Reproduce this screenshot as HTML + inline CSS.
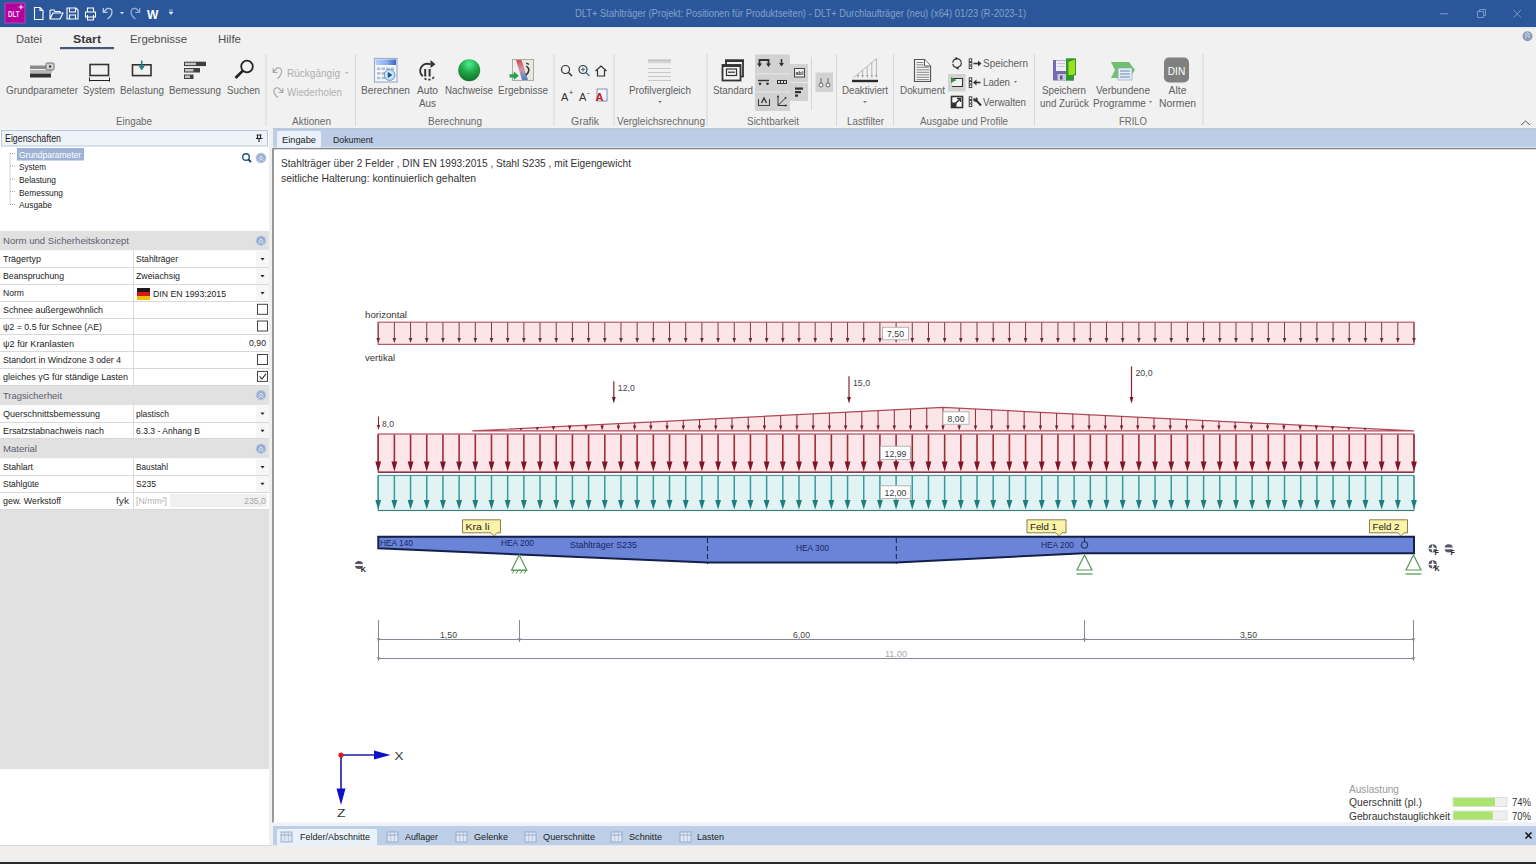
<!DOCTYPE html>
<html><head><meta charset="utf-8"><title>DLT+ Stahlträger</title>
<style>
html,body{margin:0;padding:0;width:1536px;height:864px;overflow:hidden;background:#f0f0f0}
svg{display:block}
text{font-family:"Liberation Sans", sans-serif;white-space:pre}
</style></head><body>
<svg width="1536" height="864" viewBox="0 0 1536 864">
<rect x="0" y="0" width="1536" height="864" fill="#f0f0f0" />
<rect x="0" y="0" width="1536" height="27" fill="#2b579a" />
<rect x="0" y="27" width="1536" height="101" fill="#f1f1f1" />
<rect x="5" y="3" width="20" height="20" fill="#b4009e" stroke="#c050c0" stroke-width="0.8" />
<text x="8" y="16.5" font-size="9" fill="#ffd8f4" text-anchor="start" textLength="11.5" lengthAdjust="spacingAndGlyphs" font-weight="bold" >DLT</text>
<path d="M21 4 L22 6.5 L24.5 7 L22 7.8 L21 10 L20 7.8 L17.5 7 L20 6.5 Z" fill="#ffc0f0" />
<path d="M34.5 7.5 h5.5 l3 3 v9 h-8.5 z M40 7.5 v3 h3" fill="none" stroke="#ffffff" stroke-width="1.1" />
<path d="M50 10 h4 l1 1.5 h5 v2 M50 10 v9 h10 l3 -6 h-10 l-3 6" fill="none" stroke="#ffffff" stroke-width="1.1" />
<path d="M67 8 h9 l2 2 v9 h-11 z M69.5 8 v4 h6 v-4 M69.5 19 v-4 h6 v4" fill="none" stroke="#ffffff" stroke-width="1.1" />
<path d="M85.5 12 h10 v5 h-10 z M87.5 12 v-4 h6 v4 M87.5 15 v5 h6 v-5" fill="none" stroke="#ffffff" stroke-width="1.1" />
<path d="M107.5 19 C114 14.5, 113 7, 107 8.5 L103.5 12 M103.3 8 v4.3 h4.3" fill="none" stroke="#b4c8e6" stroke-width="1.3" />
<path d="M120 12 h4 l-2 2.5 z" fill="#d0dcef" />
<path d="M135.5 19 C129 14.5, 130 7, 136 8.5 L139.5 12 M139.7 8 v4.3 h-4.3" fill="none" stroke="#8fa9d2" stroke-width="1.3" />
<text x="147" y="19" font-size="12" fill="#ffffff" text-anchor="start" font-weight="bold" >W</text>
<path d="M169 12 h4 l-2 2.5 z M169 10 h4" fill="#e0e8f4" stroke="#e0e8f4" stroke-width="0.6" />
<text x="575" y="17" font-size="11" fill="#84a0cb" text-anchor="start" textLength="451" lengthAdjust="spacingAndGlyphs" >DLT+ Stahlträger (Projekt: Positionen für Produktseiten) - DLT+ Durchlaufträger (neu) (x64) 01/23 (R-2023-1)</text>
<line x1="1440" y1="13.8" x2="1448" y2="13.8" stroke="#7898cc" stroke-width="1.1" />
<path d="M1477.5 11.5 h6 v6 h-6 z M1479.5 11.5 v-2 h6 v6 h-2" fill="none" stroke="#7898cc" stroke-width="1" />
<path d="M1513.5 10 l7.5 7.5 M1521 10 l-7.5 7.5" fill="none" stroke="#7898cc" stroke-width="1" />
<rect x="0" y="27" width="1536" height="1.2" fill="#e2eaf6" />
<text x="16" y="42.5" font-size="11" fill="#505050" text-anchor="start" textLength="26" lengthAdjust="spacingAndGlyphs" >Datei</text>
<text x="73" y="42.5" font-size="11" fill="#3a3a3a" text-anchor="start" textLength="28" lengthAdjust="spacingAndGlyphs" font-weight="bold" >Start</text>
<text x="130" y="42.5" font-size="11" fill="#505050" text-anchor="start" textLength="57" lengthAdjust="spacingAndGlyphs" >Ergebnisse</text>
<text x="218" y="42.5" font-size="11" fill="#505050" text-anchor="start" textLength="23" lengthAdjust="spacingAndGlyphs" >Hilfe</text>
<rect x="60" y="47" width="54" height="2.2" fill="#44577a" />
<circle cx="1527.5" cy="36.2" r="5" fill="#8c9cba"/>
<path d="M1525 37.8 l2.5 -2.3 l2.5 2.3 M1525 35.2 l2.5 -2.3 l2.5 2.3" fill="none" stroke="#e8eef8" stroke-width="1" />
<path d="M1521 125 l4.5 -4 l4.5 4" fill="none" stroke="#555" stroke-width="1" />
<line x1="266" y1="54" x2="266" y2="126" stroke="#d6d6d6" stroke-width="1" />
<line x1="355.5" y1="54" x2="355.5" y2="126" stroke="#d6d6d6" stroke-width="1" />
<line x1="554" y1="54" x2="554" y2="126" stroke="#d6d6d6" stroke-width="1" />
<line x1="614" y1="54" x2="614" y2="126" stroke="#d6d6d6" stroke-width="1" />
<line x1="707" y1="54" x2="707" y2="126" stroke="#d6d6d6" stroke-width="1" />
<line x1="836.5" y1="54" x2="836.5" y2="126" stroke="#d6d6d6" stroke-width="1" />
<line x1="893.5" y1="54" x2="893.5" y2="126" stroke="#d6d6d6" stroke-width="1" />
<line x1="1034.5" y1="54" x2="1034.5" y2="126" stroke="#d6d6d6" stroke-width="1" />
<line x1="1203" y1="54" x2="1203" y2="126" stroke="#d6d6d6" stroke-width="1" />
<line x1="811.5" y1="57" x2="811.5" y2="110" stroke="#d6d6d6" stroke-width="1" />
<text x="6" y="93.5" font-size="10" fill="#606060" text-anchor="start" textLength="72" lengthAdjust="spacingAndGlyphs" >Grundparameter</text>
<text x="83" y="93.5" font-size="10" fill="#606060" text-anchor="start" textLength="32" lengthAdjust="spacingAndGlyphs" >System</text>
<text x="120" y="93.5" font-size="10" fill="#606060" text-anchor="start" textLength="44" lengthAdjust="spacingAndGlyphs" >Belastung</text>
<text x="169" y="93.5" font-size="10" fill="#606060" text-anchor="start" textLength="52" lengthAdjust="spacingAndGlyphs" >Bemessung</text>
<text x="227" y="93.5" font-size="10" fill="#606060" text-anchor="start" textLength="33" lengthAdjust="spacingAndGlyphs" >Suchen</text>
<text x="116" y="124.5" font-size="10" fill="#6a6a6a" text-anchor="start" textLength="36" lengthAdjust="spacingAndGlyphs" >Eingabe</text>
<rect x="30" y="65.5" width="20" height="3.5" fill="#8c8c8c" />
<rect x="30" y="70" width="22" height="3" fill="#b8b8b8" />
<rect x="30" y="73.5" width="21" height="4" fill="#333333" />
<rect x="46" y="63" width="8" height="7" fill="#cfcfcf" stroke="#777" stroke-width="1" rx="1"/>
<rect x="49" y="65.5" width="2" height="2" fill="#333" />
<rect x="90" y="64.5" width="18.5" height="11" fill="none" stroke="#333" stroke-width="1.6" />
<path d="M89.5 80.5 h20 M89.5 77.5 v4 M109.5 77.5 v4" fill="none" stroke="#222" stroke-width="1" />
<rect x="132.5" y="64.8" width="18.5" height="10.8" fill="none" stroke="#333" stroke-width="1.6" />
<path d="M141.7 60.5 v6" fill="none" stroke="#1a8080" stroke-width="1.5" />
<path d="M138.7 66 l3 4.5 l3 -4.5 z" fill="#1a8080" />
<rect x="184" y="61.7" width="22" height="4.4" fill="#404040" />
<rect x="184" y="68" width="16" height="4.5" fill="#404040" />
<rect x="184" y="74.5" width="9.5" height="4.5" fill="#404040" />
<rect x="185" y="62.7" width="11" height="2.4" fill="#c4c4c4" />
<rect x="185" y="69" width="8.5" height="2.5" fill="#c4c4c4" />
<rect x="185" y="75.5" width="5" height="2.5" fill="#c4c4c4" />
<circle cx="247" cy="66.5" r="5.8" fill="none" stroke="#222" stroke-width="1.8"/>
<path d="M242.8 70.8 L235.5 78" fill="none" stroke="#222" stroke-width="2.6" />
<path d="M277.5 78.5 C283.5 74, 282.5 66.5, 277 68 L273.5 72 M273.2 68.2 v4.3 h4.3" fill="none" stroke="#a8a8a8" stroke-width="1.2" />
<text x="287" y="76.5" font-size="10" fill="#b0b0b0" text-anchor="start" textLength="53" lengthAdjust="spacingAndGlyphs" >Rückgängig</text>
<path d="M345 72 h3.5 l-1.75 2 z" fill="#b8b8b8" />
<path d="M278 97.5 C272 93, 273 86.5, 278.5 88 L282.5 92 M282.8 88.2 v4.3 h-4.3" fill="none" stroke="#a8a8a8" stroke-width="1.2" />
<text x="287" y="95.5" font-size="10" fill="#b0b0b0" text-anchor="start" textLength="55" lengthAdjust="spacingAndGlyphs" >Wiederholen</text>
<text x="292" y="124.5" font-size="10" fill="#6a6a6a" text-anchor="start" textLength="39" lengthAdjust="spacingAndGlyphs" >Aktionen</text>
<text x="361" y="93.5" font-size="10" fill="#606060" text-anchor="start" textLength="49" lengthAdjust="spacingAndGlyphs" >Berechnen</text>
<text x="417" y="93.5" font-size="10" fill="#606060" text-anchor="start" textLength="21" lengthAdjust="spacingAndGlyphs" >Auto</text>
<text x="419" y="106.5" font-size="10" fill="#606060" text-anchor="start" textLength="17" lengthAdjust="spacingAndGlyphs" >Aus</text>
<text x="445" y="93.5" font-size="10" fill="#606060" text-anchor="start" textLength="48" lengthAdjust="spacingAndGlyphs" >Nachweise</text>
<text x="498" y="93.5" font-size="10" fill="#606060" text-anchor="start" textLength="50" lengthAdjust="spacingAndGlyphs" >Ergebnisse</text>
<text x="428" y="124.5" font-size="10" fill="#6a6a6a" text-anchor="start" textLength="54" lengthAdjust="spacingAndGlyphs" >Berechnung</text>
<defs><linearGradient id="gbh" x1="0" x2="1"><stop offset="0" stop-color="#b4d0f8"/><stop offset="0.55" stop-color="#8ab0ec"/><stop offset="1" stop-color="#3c64c8"/></linearGradient></defs>
<rect x="374.5" y="58.5" width="22.5" height="23.5" fill="#f6f9fc" stroke="#9eaec6" stroke-width="1.2" />
<rect x="375.5" y="59.5" width="20.5" height="5.5" fill="url(#gbh)" />
<rect x="377.0" y="67.5" width="3.4" height="2.6" fill="#b4c0d0" />
<rect x="381.6" y="67.5" width="3.4" height="2.6" fill="#b4c0d0" />
<rect x="386.2" y="67.5" width="3.4" height="2.6" fill="#b4c0d0" />
<rect x="390.8" y="67.5" width="3.4" height="2.6" fill="#b4c0d0" />
<rect x="377.0" y="72.1" width="3.4" height="2.6" fill="#b4c0d0" />
<rect x="381.6" y="72.1" width="3.4" height="2.6" fill="#b4c0d0" />
<rect x="386.2" y="72.1" width="3.4" height="2.6" fill="#b4c0d0" />
<rect x="390.8" y="72.1" width="3.4" height="2.6" fill="#b4c0d0" />
<rect x="377.0" y="76.7" width="3.4" height="2.6" fill="#b4c0d0" />
<rect x="381.6" y="76.7" width="3.4" height="2.6" fill="#b4c0d0" />
<rect x="386.2" y="76.7" width="3.4" height="2.6" fill="#b4c0d0" />
<rect x="390.8" y="76.7" width="3.4" height="2.6" fill="#b4c0d0" />
<circle cx="389.6" cy="75" r="5.4" fill="#c4e6fa" stroke="#5c88b4" stroke-width="0.9"/>
<path d="M387.8 72 l4.6 3 l-4.6 3 z" fill="#1a4c9c" />
<path d="M422.8 76.2 A7 7 0 0 1 429 64" fill="none" stroke="#333" stroke-width="1.9" />
<path d="M428.5 64 h2" fill="none" stroke="#333" stroke-width="1.9" />
<path d="M430.5 60 L435.5 64.2 L430.5 68 Z" fill="#333" />
<path d="M424.5 78.5 A7 7 0 0 0 434.5 76" fill="none" stroke="#333" stroke-width="1.8" stroke-dasharray="2.2 1.8"/>
<rect x="424.2" y="69" width="2" height="7.5" fill="#333" />
<rect x="428.6" y="69" width="2" height="7.5" fill="#333" />
<defs><radialGradient id="gball" cx="0.5" cy="0.22" r="0.85"><stop offset="0" stop-color="#4ef08e"/><stop offset="0.45" stop-color="#22a848"/><stop offset="1" stop-color="#0c6a24"/></radialGradient></defs>
<circle cx="469.2" cy="70.3" r="11" fill="url(#gball)"/>
<defs><linearGradient id="gerg" x1="0" y1="0" x2="0" y2="1"><stop offset="0" stop-color="#e04a4a"/><stop offset="0.5" stop-color="#c89aa8"/><stop offset="1" stop-color="#4a7ec4"/></linearGradient></defs>
<rect x="512.5" y="59.5" width="21" height="21" fill="#ebe8e0" stroke="#a4a4a4" stroke-width="0.9" />
<path d="M513 60 L516 60 L522 80 L513 80 Z" fill="#f2eeee" />
<path d="M516 60 L521.5 60 L528 80 L522 80 Z" fill="url(#gerg)" />
<path d="M526.3 66.2 q5.2 3.6 -0.3 9" fill="none" stroke="#333" stroke-width="1.6" />
<path d="M526.2 63.2 l2.8 1.2" fill="none" stroke="#333" stroke-width="1.3" />
<path d="M509.5 74.2 h4.3 v-2.6 l5 4.2 l-5 4.2 v-2.6 h-4.3 z" fill="#2aa04a" />
<circle cx="565.5" cy="69.5" r="4" fill="none" stroke="#333" stroke-width="1.2"/>
<path d="M568.5 72.5 l3.5 3.5" fill="none" stroke="#333" stroke-width="1.4" />
<circle cx="583" cy="69.5" r="4" fill="none" stroke="#333" stroke-width="1.2"/>
<path d="M586 72.5 l3.5 3.5 M581 69.5 h4 M583 67.5 v4" fill="none" stroke="#2a7a9a" stroke-width="1.2" />
<path d="M595.5 71 l5.5 -5 l5.5 5 M597.5 70 v6 h7 v-6" fill="none" stroke="#333" stroke-width="1.2" />
<text x="561" y="101" font-size="11" fill="#333" text-anchor="start" >A</text>
<text x="569" y="95" font-size="7" fill="#333" text-anchor="start" >+</text>
<text x="579" y="101" font-size="11" fill="#333" text-anchor="start" >A</text>
<text x="587" y="95" font-size="8" fill="#333" text-anchor="start" >-</text>
<rect x="597" y="89" width="10" height="12" fill="#f4f4f8" stroke="#6a7ab0" stroke-width="0.8" />
<text x="595.5" y="100.5" font-size="11" fill="#c01818" text-anchor="start" font-weight="bold" >A</text>
<text x="571" y="124.5" font-size="10" fill="#6a6a6a" text-anchor="start" textLength="28" lengthAdjust="spacingAndGlyphs" >Grafik</text>
<rect x="648" y="59.5" width="23" height="2" fill="#c0c0c0" />
<rect x="648" y="62" width="23" height="1.2" fill="#d0d0d0" />
<line x1="648" y1="68.5" x2="671" y2="68.5" stroke="#c8c8c8" stroke-width="1" />
<line x1="648" y1="72.5" x2="671" y2="72.5" stroke="#c8c8c8" stroke-width="1" />
<line x1="648" y1="76.5" x2="671" y2="76.5" stroke="#c8c8c8" stroke-width="1" />
<line x1="648" y1="80.5" x2="671" y2="80.5" stroke="#c8c8c8" stroke-width="1" />
<text x="629" y="94" font-size="10" fill="#606060" text-anchor="start" textLength="62" lengthAdjust="spacingAndGlyphs" >Profilvergleich</text>
<path d="M658 101 h4 l-2 2 z" fill="#777" />
<text x="617" y="124.5" font-size="10" fill="#6a6a6a" text-anchor="start" textLength="88" lengthAdjust="spacingAndGlyphs" >Vergleichsrechnung</text>
<rect x="726" y="60.5" width="17" height="16" fill="none" stroke="#333" stroke-width="1.8" />
<rect x="725" y="59.5" width="19" height="2.5" fill="#333" />
<rect x="722.5" y="65" width="18" height="15.5" fill="#f3f3f3" stroke="#333" stroke-width="1.8" />
<rect x="722" y="64.5" width="19" height="2.5" fill="#333" />
<rect x="726.5" y="69" width="10" height="6.5" fill="none" stroke="#333" stroke-width="1.2" />
<line x1="728" y1="72.2" x2="735" y2="72.2" stroke="#333" stroke-width="1.2" />
<text x="713" y="93.5" font-size="10" fill="#606060" text-anchor="start" textLength="40" lengthAdjust="spacingAndGlyphs" >Standard</text>
<rect x="755" y="54.4" width="35" height="56.6" fill="#d2d2d2" />
<rect x="790" y="64" width="18" height="37" fill="#d2d2d2" />
<rect x="815.5" y="72.5" width="17.5" height="19.5" fill="#d2d2d2" />
<line x1="756" y1="73.8" x2="790" y2="73.8" stroke="#e8e8e8" stroke-width="1" />
<line x1="756" y1="92" x2="790" y2="92" stroke="#e8e8e8" stroke-width="1" />
<line x1="790" y1="82.5" x2="808" y2="82.5" stroke="#e8e8e8" stroke-width="1" />
<text x="747" y="124.5" font-size="10" fill="#6a6a6a" text-anchor="start" textLength="52" lengthAdjust="spacingAndGlyphs" >Sichtbarkeit</text>
<path d="M759.5 64.5 v-4.5 h9 v4.5" fill="none" stroke="#333" stroke-width="1.8" />
<path d="M757 63.5 h5 l-2.5 3.5 z M766 63.5 h5 l-2.5 3.5 z" fill="#333" />
<path d="M781.5 59 v5" fill="none" stroke="#333" stroke-width="1.6" />
<path d="M779 63 h5 l-2.5 3.5 z" fill="#333" />
<rect x="794.5" y="68.5" width="10" height="8.5" fill="#f0f0f0" stroke="#444" stroke-width="1" />
<text x="799.5" y="75" font-size="5.5" fill="#333" text-anchor="middle" font-weight="bold" >abl</text>
<path d="M758 80.5 h11" fill="none" stroke="#333" stroke-width="1.4" />
<circle cx="760" cy="83.8" r="1.3" fill="#333"/><circle cx="767.5" cy="83.8" r="1.3" fill="#333"/>
<rect x="777" y="80" width="10" height="4" fill="#333" />
<rect x="778" y="81" width="2" height="2" fill="#ddd" />
<rect x="781" y="81" width="2" height="2" fill="#ddd" />
<rect x="784" y="81" width="2" height="2" fill="#ddd" />
<rect x="795" y="87.5" width="8" height="2.2" fill="#333" />
<rect x="795" y="91" width="6" height="2.2" fill="#333" />
<rect x="795" y="94.5" width="3" height="2.2" fill="#333" />
<path d="M758.5 99 v6.5 h11 v-6.5" fill="none" stroke="#444" stroke-width="1.1" />
<path d="M761.5 103 l2.5 -5 l2.5 5" fill="none" stroke="#333" stroke-width="1.3" />
<path d="M778 96.5 v9 h9 M778 105.5 l7 -7" fill="none" stroke="#333" stroke-width="1" />
<circle cx="778" cy="96.5" r="1" fill="#333"/><circle cx="785.5" cy="98" r="1" fill="#333"/><circle cx="785.5" cy="105.5" r="1" fill="#333"/>
<path d="M821 78 v5 M828 78 v5" fill="none" stroke="#666" stroke-width="1" />
<circle cx="821" cy="85" r="2" fill="#f4f4f4" stroke="#666" stroke-width="1"/><circle cx="828" cy="85" r="2" fill="#f4f4f4" stroke="#666" stroke-width="1"/>
<path d="M853 78 L876.5 58.5" fill="none" stroke="#bcbcbc" stroke-width="1" />
<line x1="858.0" y1="73.85106382978724" x2="858.0" y2="76" stroke="#b4b4b4" stroke-width="1" />
<path d="M856.50 75.00 L859.50 75.00 L858.00 78.00 Z" fill="#b0b0b0" />
<line x1="862.6" y1="70.03404255319147" x2="862.6" y2="76" stroke="#b4b4b4" stroke-width="1" />
<path d="M861.10 75.00 L864.10 75.00 L862.60 78.00 Z" fill="#b0b0b0" />
<line x1="867.2" y1="66.2170212765957" x2="867.2" y2="76" stroke="#b4b4b4" stroke-width="1" />
<path d="M865.70 75.00 L868.70 75.00 L867.20 78.00 Z" fill="#b0b0b0" />
<line x1="871.8" y1="62.400000000000034" x2="871.8" y2="76" stroke="#b4b4b4" stroke-width="1" />
<path d="M870.30 75.00 L873.30 75.00 L871.80 78.00 Z" fill="#b0b0b0" />
<line x1="876.4" y1="58.582978723404274" x2="876.4" y2="76" stroke="#b4b4b4" stroke-width="1" />
<path d="M874.90 75.00 L877.90 75.00 L876.40 78.00 Z" fill="#b0b0b0" />
<line x1="852" y1="81" x2="878" y2="81" stroke="#2a2a2a" stroke-width="2.4" />
<text x="842" y="93.5" font-size="10" fill="#606060" text-anchor="start" textLength="46" lengthAdjust="spacingAndGlyphs" >Deaktiviert</text>
<path d="M863 101 h4 l-2 2 z" fill="#777" />
<text x="847" y="124.5" font-size="10" fill="#6a6a6a" text-anchor="start" textLength="37" lengthAdjust="spacingAndGlyphs" >Lastfilter</text>
<path d="M914.5 59.5 h10 l6 6.5 v15.5 h-16 z" fill="#f6f6f6" stroke="#555" stroke-width="1.2" />
<path d="M924.5 59.5 v6.5 h6" fill="#ffffff" stroke="#555" stroke-width="1" />
<line x1="916.5" y1="62.5" x2="923.5" y2="62.5" stroke="#8c8c8c" stroke-width="1.1" />
<line x1="916.5" y1="64.8" x2="923.5" y2="64.8" stroke="#8c8c8c" stroke-width="1.1" />
<line x1="916.5" y1="67.3" x2="929" y2="67.3" stroke="#8c8c8c" stroke-width="1.1" />
<line x1="916.5" y1="69.8" x2="929" y2="69.8" stroke="#8c8c8c" stroke-width="1.1" />
<line x1="916.5" y1="72.3" x2="929" y2="72.3" stroke="#8c8c8c" stroke-width="1.1" />
<line x1="916.5" y1="74.8" x2="929" y2="74.8" stroke="#8c8c8c" stroke-width="1.1" />
<line x1="916.5" y1="77.3" x2="929" y2="77.3" stroke="#8c8c8c" stroke-width="1.1" />
<line x1="916.5" y1="79.6" x2="929" y2="79.6" stroke="#8c8c8c" stroke-width="1.1" />
<text x="900" y="93.5" font-size="10" fill="#606060" text-anchor="start" textLength="45" lengthAdjust="spacingAndGlyphs" >Dokument</text>
<circle cx="957" cy="63.1" r="4.3" fill="none" stroke="#333" stroke-width="1.2" stroke-dasharray="5.5 1.3"/>
<path d="M955.5 57 l3 1.6 l-3 1.6 z M958.5 66.5 l-3 1.6 l3 1.6 z" fill="#222" />
<rect x="948" y="74" width="17.5" height="17.5" fill="#d2d2d2" />
<path d="M952 78.5 h10.5 v8 h-10.5" fill="#eef4ee" stroke="#333" stroke-width="1.1" />
<path d="M951 77 l5.5 3 l-5.5 3 z" fill="#3a8a4a" />
<rect x="951.5" y="96.5" width="11" height="11" fill="#ffffff" stroke="#333" stroke-width="1.6" />
<rect x="951.5" y="102.5" width="5" height="5" fill="#333" />
<path d="M955 104 l5 -5 M957 98.5 h3.5 v3.5" fill="none" stroke="#333" stroke-width="1.5" />
<rect x="969.2" y="58.8" width="2.6" height="2.6" fill="#ffffff" stroke="#333" stroke-width="0.9" />
<rect x="969.2" y="62.4" width="2.6" height="2.6" fill="#ffffff" stroke="#333" stroke-width="0.9" />
<rect x="969.2" y="66.0" width="2.6" height="2.6" fill="#ffffff" stroke="#333" stroke-width="0.9" />
<rect x="969.2" y="77.8" width="2.6" height="2.6" fill="#ffffff" stroke="#333" stroke-width="0.9" />
<rect x="969.2" y="81.39999999999999" width="2.6" height="2.6" fill="#ffffff" stroke="#333" stroke-width="0.9" />
<rect x="969.2" y="85.0" width="2.6" height="2.6" fill="#ffffff" stroke="#333" stroke-width="0.9" />
<rect x="969.2" y="96.8" width="2.6" height="2.6" fill="#ffffff" stroke="#333" stroke-width="0.9" />
<rect x="969.2" y="100.39999999999999" width="2.6" height="2.6" fill="#ffffff" stroke="#333" stroke-width="0.9" />
<rect x="969.2" y="104.0" width="2.6" height="2.6" fill="#ffffff" stroke="#333" stroke-width="0.9" />
<path d="M973.5 63.5 h5.5" fill="none" stroke="#333" stroke-width="1.6" />
<path d="M978 60.5 l3.5 3 l-3.5 3 z" fill="#333" />
<path d="M975 82.5 h5.5" fill="none" stroke="#333" stroke-width="1.6" />
<path d="M976.5 79.5 l-3.5 3 l3.5 3 z" fill="#333" />
<path d="M975 99 l6 6.5" fill="none" stroke="#333" stroke-width="2" />
<circle cx="975.5" cy="99.5" r="2.2" fill="#333"/>
<rect x="974.3" y="96.5" width="1.5" height="2.2" fill="#f1f1f1" />
<text x="983" y="67" font-size="10" fill="#606060" text-anchor="start" textLength="45" lengthAdjust="spacingAndGlyphs" >Speichern</text>
<text x="983" y="86" font-size="10" fill="#606060" text-anchor="start" textLength="27" lengthAdjust="spacingAndGlyphs" >Laden</text>
<path d="M1014 81 h3 l-1.5 2 z" fill="#777" />
<text x="983" y="105.5" font-size="10" fill="#606060" text-anchor="start" textLength="43" lengthAdjust="spacingAndGlyphs" >Verwalten</text>
<text x="920" y="124.5" font-size="10" fill="#6a6a6a" text-anchor="start" textLength="88" lengthAdjust="spacingAndGlyphs" >Ausgabe und Profile</text>
<rect x="1053" y="60" width="21" height="20.5" fill="#7868b4" />
<rect x="1056" y="60.5" width="10" height="10.5" fill="#eeeef6" />
<line x1="1057" y1="63.5" x2="1065" y2="63.5" stroke="#c8c8d8" stroke-width="1" />
<line x1="1057" y1="66.5" x2="1065" y2="66.5" stroke="#c8c8d8" stroke-width="1" />
<rect x="1057.5" y="74" width="11" height="6.5" fill="#c8c8dc" />
<rect x="1060" y="75.5" width="2.5" height="4" fill="#5a5a90" />
<rect x="1066" y="58.3" width="10" height="17" fill="#2e9a2e" />
<path d="M1068.5 62 L1075 59.5 V74 L1068.5 76.5 Z" fill="#9ee020" />
<rect x="1066" y="75" width="7.5" height="5.5" fill="#2e9a2e" />
<text x="1042" y="93.5" font-size="10" fill="#606060" text-anchor="start" textLength="44" lengthAdjust="spacingAndGlyphs" >Speichern</text>
<text x="1040" y="106.5" font-size="10" fill="#606060" text-anchor="start" textLength="49" lengthAdjust="spacingAndGlyphs" >und Zurück</text>
<path d="M1111 62 h18 l6 8 l-6 8 h-18 l4 -8 z" fill="#70c070" />
<rect x="1118" y="68" width="14" height="12" fill="#e4ecf4" stroke="#8aa0b8" stroke-width="0.6" />
<line x1="1120" y1="71" x2="1130" y2="71" stroke="#6a8ab0" stroke-width="1" />
<line x1="1120" y1="74" x2="1130" y2="74" stroke="#6a8ab0" stroke-width="1" />
<line x1="1120" y1="77" x2="1130" y2="77" stroke="#6a8ab0" stroke-width="1" />
<text x="1096" y="93.5" font-size="10" fill="#606060" text-anchor="start" textLength="54" lengthAdjust="spacingAndGlyphs" >Verbundene</text>
<text x="1093" y="106.5" font-size="10" fill="#606060" text-anchor="start" textLength="53" lengthAdjust="spacingAndGlyphs" >Programme</text>
<path d="M1149 101 h3 l-1.5 2 z" fill="#777" />
<rect x="1164" y="57.5" width="25" height="25" fill="#808080" rx="5"/>
<text x="1176.5" y="74.5" font-size="11.5" fill="#ffffff" text-anchor="middle" textLength="17.5" lengthAdjust="spacingAndGlyphs" >DIN</text>
<text x="1168.5" y="93.5" font-size="10" fill="#606060" text-anchor="start" textLength="18" lengthAdjust="spacingAndGlyphs" >Alte</text>
<text x="1159" y="106.5" font-size="10" fill="#606060" text-anchor="start" textLength="37" lengthAdjust="spacingAndGlyphs" >Normen</text>
<text x="1119" y="124.5" font-size="10" fill="#6a6a6a" text-anchor="start" textLength="28" lengthAdjust="spacingAndGlyphs" >FRILO</text>
<rect x="0" y="128" width="272" height="717" fill="#ffffff" />
<rect x="0" y="128" width="272" height="2" fill="#f3f3f3" />
<rect x="1.5" y="130.5" width="266" height="15.5" fill="#eef3fa" stroke="#b9c9dd" stroke-width="1" />
<text x="5" y="142" font-size="10" fill="#222" text-anchor="start" textLength="56" lengthAdjust="spacingAndGlyphs" >Eigenschaften</text>
<path d="M256.5 135 h5 M257.5 135 v3.5 h3 v-3.5 M256 138.5 h6.5 M259 138.5 v3.5" fill="none" stroke="#222" stroke-width="1.1" />
<path d="M10 153.5 v51 M10 153.5 h6 M10 166 h6 M10 179 h6 M10 191.5 h6 M10 204.5 h6" fill="none" stroke="#a8a8a8" stroke-width="1" stroke-dasharray="1 1"/>
<rect x="17" y="148" width="67" height="12.5" fill="#9db2d6" />
<text x="19" y="157.5" font-size="9.5" fill="#ffffff" text-anchor="start" textLength="62" lengthAdjust="spacingAndGlyphs" >Grundparameter</text>
<text x="19" y="170" font-size="9.5" fill="#222" text-anchor="start" textLength="27" lengthAdjust="spacingAndGlyphs" >System</text>
<text x="19" y="182.5" font-size="9.5" fill="#222" text-anchor="start" textLength="37" lengthAdjust="spacingAndGlyphs" >Belastung</text>
<text x="19" y="195.5" font-size="9.5" fill="#222" text-anchor="start" textLength="44" lengthAdjust="spacingAndGlyphs" >Bemessung</text>
<text x="19" y="208" font-size="9.5" fill="#222" text-anchor="start" textLength="33" lengthAdjust="spacingAndGlyphs" >Ausgabe</text>
<circle cx="246" cy="157" r="3.3" fill="none" stroke="#1a5a7a" stroke-width="1.4"/>
<path d="M248.5 159.5 l2.5 2.5" fill="none" stroke="#1a3a5a" stroke-width="1.8" />
<circle cx="261" cy="158" r="5" fill="#9aaed2" stroke="#c8d4e8" stroke-width="0.8"/>
<path d="M258.5 158.5 l2.5 -2.2 l2.5 2.2 M258.5 161 l2.5 -2.2 l2.5 2.2" fill="none" stroke="#e8eef8" stroke-width="1" />
<rect x="0" y="231" width="269" height="19.5" fill="#e1e1e1" />
<text x="3" y="244.2" font-size="9.5" fill="#5c606e" text-anchor="start" textLength="126" lengthAdjust="spacingAndGlyphs" >Norm und Sicherheitskonzept</text>
<circle cx="261" cy="240.8" r="5" fill="#9aaed2" stroke="#c8d4e8" stroke-width="0.8"/>
<path d="M258.5 241.3 l2.5 -2.2 l2.5 2.2 M258.5 243.8 l2.5 -2.2 l2.5 2.2" fill="none" stroke="#e8eef8" stroke-width="1" />
<rect x="0" y="250.5" width="269" height="16.899999999999977" fill="#ffffff" />
<line x1="133.5" y1="250.5" x2="133.5" y2="267.4" stroke="#dcdcdc" stroke-width="1" />
<text x="3" y="262.3" font-size="9.5" fill="#222" text-anchor="start" textLength="38" lengthAdjust="spacingAndGlyphs" >Trägertyp</text>
<rect x="256" y="251.0" width="13" height="15.899999999999977" fill="#f6f6f6" />
<path d="M260.5 258.0 h4 l-2 2.5 z" fill="#222" />
<text x="136" y="262.3" font-size="9.5" fill="#222" text-anchor="start" textLength="42" lengthAdjust="spacingAndGlyphs" >Stahlträger</text>
<rect x="0" y="267.4" width="269" height="17.100000000000023" fill="#ffffff" />
<line x1="133.5" y1="267.4" x2="133.5" y2="284.5" stroke="#dcdcdc" stroke-width="1" />
<text x="3" y="279.2" font-size="9.5" fill="#222" text-anchor="start" textLength="61" lengthAdjust="spacingAndGlyphs" >Beanspruchung</text>
<rect x="256" y="267.9" width="13" height="16.100000000000023" fill="#f6f6f6" />
<path d="M260.5 274.9 h4 l-2 2.5 z" fill="#222" />
<text x="136" y="279.2" font-size="9.5" fill="#222" text-anchor="start" textLength="44" lengthAdjust="spacingAndGlyphs" >Zweiachsig</text>
<rect x="0" y="284.5" width="269" height="16.80000000000001" fill="#ffffff" />
<line x1="133.5" y1="284.5" x2="133.5" y2="301.3" stroke="#dcdcdc" stroke-width="1" />
<text x="3" y="296.3" font-size="9.5" fill="#222" text-anchor="start" textLength="21" lengthAdjust="spacingAndGlyphs" >Norm</text>
<rect x="256" y="285.0" width="13" height="15.800000000000011" fill="#f6f6f6" />
<path d="M260.5 292.0 h4 l-2 2.5 z" fill="#222" />
<rect x="137" y="288" width="13" height="4" fill="#1a1a1a" />
<rect x="137" y="292" width="13" height="4" fill="#d81818" />
<rect x="137" y="296" width="13" height="4" fill="#f0c000" />
<text x="153" y="296.7" font-size="9.5" fill="#222" text-anchor="start" textLength="73" lengthAdjust="spacingAndGlyphs" >DIN EN 1993:2015</text>
<rect x="0" y="301.3" width="269" height="16.69999999999999" fill="#ffffff" />
<line x1="133.5" y1="301.3" x2="133.5" y2="318" stroke="#dcdcdc" stroke-width="1" />
<text x="3" y="313.1" font-size="9.5" fill="#222" text-anchor="start" textLength="100" lengthAdjust="spacingAndGlyphs" >Schnee außergewöhnlich</text>
<rect x="257.5" y="304.3" width="10" height="10" fill="#ffffff" stroke="#444" stroke-width="1" />
<rect x="0" y="318" width="269" height="16.69999999999999" fill="#ffffff" />
<line x1="133.5" y1="318" x2="133.5" y2="334.7" stroke="#dcdcdc" stroke-width="1" />
<text x="3" y="329.8" font-size="9.5" fill="#222" text-anchor="start" textLength="99" lengthAdjust="spacingAndGlyphs" >ψ2 = 0.5 für Schnee (AE)</text>
<rect x="257.5" y="321" width="10" height="10" fill="#ffffff" stroke="#444" stroke-width="1" />
<rect x="0" y="334.7" width="269" height="16.80000000000001" fill="#ffffff" />
<line x1="133.5" y1="334.7" x2="133.5" y2="351.5" stroke="#dcdcdc" stroke-width="1" />
<text x="3" y="346.5" font-size="9.5" fill="#222" text-anchor="start" textLength="71" lengthAdjust="spacingAndGlyphs" >ψ2 für Kranlasten</text>
<text x="266" y="346.3" font-size="9.5" fill="#222" text-anchor="end" textLength="17" lengthAdjust="spacingAndGlyphs" >0,90</text>
<rect x="0" y="351.5" width="269" height="16.899999999999977" fill="#ffffff" />
<line x1="133.5" y1="351.5" x2="133.5" y2="368.4" stroke="#dcdcdc" stroke-width="1" />
<text x="3" y="363.3" font-size="9.5" fill="#222" text-anchor="start" textLength="118" lengthAdjust="spacingAndGlyphs" >Standort in Windzone 3 oder 4</text>
<rect x="257.5" y="354.5" width="10" height="10" fill="#ffffff" stroke="#444" stroke-width="1" />
<rect x="0" y="368.4" width="269" height="16.900000000000034" fill="#ffffff" />
<line x1="133.5" y1="368.4" x2="133.5" y2="385.3" stroke="#dcdcdc" stroke-width="1" />
<text x="3" y="380.2" font-size="9.5" fill="#222" text-anchor="start" textLength="125" lengthAdjust="spacingAndGlyphs" >gleiches γG für ständige Lasten</text>
<rect x="257.5" y="371.4" width="10" height="10" fill="#ffffff" stroke="#444" stroke-width="1" />
<path d="M259.5 376.4 l2.5 2.5 l4 -5" fill="none" stroke="#333" stroke-width="1.1" />
<rect x="0" y="385.3" width="269" height="19.69999999999999" fill="#e1e1e1" />
<text x="3" y="398.5" font-size="9.5" fill="#5c606e" text-anchor="start" textLength="59" lengthAdjust="spacingAndGlyphs" >Tragsicherheit</text>
<circle cx="261" cy="395.1" r="5" fill="#9aaed2" stroke="#c8d4e8" stroke-width="0.8"/>
<path d="M258.5 395.6 l2.5 -2.2 l2.5 2.2 M258.5 398.1 l2.5 -2.2 l2.5 2.2" fill="none" stroke="#e8eef8" stroke-width="1" />
<rect x="0" y="405" width="269" height="17.19999999999999" fill="#ffffff" />
<line x1="133.5" y1="405" x2="133.5" y2="422.2" stroke="#dcdcdc" stroke-width="1" />
<text x="3" y="416.8" font-size="9.5" fill="#222" text-anchor="start" textLength="97" lengthAdjust="spacingAndGlyphs" >Querschnittsbemessung</text>
<rect x="256" y="405.5" width="13" height="16.19999999999999" fill="#f6f6f6" />
<path d="M260.5 412.5 h4 l-2 2.5 z" fill="#222" />
<text x="136" y="416.8" font-size="9.5" fill="#222" text-anchor="start" textLength="33" lengthAdjust="spacingAndGlyphs" >plastisch</text>
<rect x="0" y="422.2" width="269" height="16.80000000000001" fill="#ffffff" />
<line x1="133.5" y1="422.2" x2="133.5" y2="439" stroke="#dcdcdc" stroke-width="1" />
<text x="3" y="434.0" font-size="9.5" fill="#222" text-anchor="start" textLength="101" lengthAdjust="spacingAndGlyphs" >Ersatzstabnachweis nach</text>
<rect x="256" y="422.7" width="13" height="15.800000000000011" fill="#f6f6f6" />
<path d="M260.5 429.7 h4 l-2 2.5 z" fill="#222" />
<text x="136" y="434.0" font-size="9.5" fill="#222" text-anchor="start" textLength="64" lengthAdjust="spacingAndGlyphs" >6.3.3 - Anhang B</text>
<rect x="0" y="439" width="269" height="19.5" fill="#e1e1e1" />
<text x="3" y="452.2" font-size="9.5" fill="#5c606e" text-anchor="start" textLength="34" lengthAdjust="spacingAndGlyphs" >Material</text>
<circle cx="261" cy="448.8" r="5" fill="#9aaed2" stroke="#c8d4e8" stroke-width="0.8"/>
<path d="M258.5 449.3 l2.5 -2.2 l2.5 2.2 M258.5 451.8 l2.5 -2.2 l2.5 2.2" fill="none" stroke="#e8eef8" stroke-width="1" />
<rect x="0" y="458.5" width="269" height="16.80000000000001" fill="#ffffff" />
<line x1="133.5" y1="458.5" x2="133.5" y2="475.3" stroke="#dcdcdc" stroke-width="1" />
<text x="3" y="470.3" font-size="9.5" fill="#222" text-anchor="start" textLength="30" lengthAdjust="spacingAndGlyphs" >Stahlart</text>
<rect x="256" y="459.0" width="13" height="15.800000000000011" fill="#f6f6f6" />
<path d="M260.5 466.0 h4 l-2 2.5 z" fill="#222" />
<text x="136" y="470.3" font-size="9.5" fill="#222" text-anchor="start" textLength="32" lengthAdjust="spacingAndGlyphs" >Baustahl</text>
<rect x="0" y="475.3" width="269" height="17.0" fill="#ffffff" />
<line x1="133.5" y1="475.3" x2="133.5" y2="492.3" stroke="#dcdcdc" stroke-width="1" />
<text x="3" y="487.1" font-size="9.5" fill="#222" text-anchor="start" textLength="36" lengthAdjust="spacingAndGlyphs" >Stahlgüte</text>
<rect x="256" y="475.8" width="13" height="16.0" fill="#f6f6f6" />
<path d="M260.5 482.8 h4 l-2 2.5 z" fill="#222" />
<text x="136" y="487.1" font-size="9.5" fill="#222" text-anchor="start" textLength="20" lengthAdjust="spacingAndGlyphs" >S235</text>
<rect x="0" y="492.3" width="269" height="17.0" fill="#ffffff" />
<line x1="133.5" y1="492.3" x2="133.5" y2="509.3" stroke="#dcdcdc" stroke-width="1" />
<text x="3" y="504.1" font-size="9.5" fill="#222" text-anchor="start" textLength="58" lengthAdjust="spacingAndGlyphs" >gew. Werkstoff</text>
<text x="129" y="504.1" font-size="9.5" fill="#333" text-anchor="end" textLength="13" lengthAdjust="spacingAndGlyphs" >fyk</text>
<text x="136" y="504.1" font-size="9.5" fill="#b0b0b0" text-anchor="start" textLength="31" lengthAdjust="spacingAndGlyphs" >[N/mm²]</text>
<rect x="170" y="493.8" width="97" height="13.5" fill="#f0f0f0" />
<text x="266" y="504.1" font-size="9.5" fill="#a8a8a8" text-anchor="end" textLength="22" lengthAdjust="spacingAndGlyphs" >235,0</text>
<line x1="0" y1="267.5" x2="269" y2="267.5" stroke="#d8d8d8" stroke-width="1" />
<line x1="0" y1="284.5" x2="269" y2="284.5" stroke="#d8d8d8" stroke-width="1" />
<line x1="0" y1="301.5" x2="269" y2="301.5" stroke="#d8d8d8" stroke-width="1" />
<line x1="0" y1="318.5" x2="269" y2="318.5" stroke="#d8d8d8" stroke-width="1" />
<line x1="0" y1="334.5" x2="269" y2="334.5" stroke="#d8d8d8" stroke-width="1" />
<line x1="0" y1="351.5" x2="269" y2="351.5" stroke="#d8d8d8" stroke-width="1" />
<line x1="0" y1="368.5" x2="269" y2="368.5" stroke="#d8d8d8" stroke-width="1" />
<line x1="0" y1="385.5" x2="269" y2="385.5" stroke="#d8d8d8" stroke-width="1" />
<line x1="0" y1="422.5" x2="269" y2="422.5" stroke="#d8d8d8" stroke-width="1" />
<line x1="0" y1="438.5" x2="269" y2="438.5" stroke="#d8d8d8" stroke-width="1" />
<line x1="0" y1="475.5" x2="269" y2="475.5" stroke="#d8d8d8" stroke-width="1" />
<line x1="0" y1="492.5" x2="269" y2="492.5" stroke="#d8d8d8" stroke-width="1" />
<line x1="0" y1="509.5" x2="269" y2="509.5" stroke="#d8d8d8" stroke-width="1" />
<rect x="0" y="509.8" width="269" height="259.2" fill="#e1e1e1" />
<rect x="269" y="128" width="3" height="717" fill="#f0f0f0" />
<rect x="272" y="148" width="2" height="674.5" fill="#989898" />
<rect x="273" y="128" width="1263" height="20" fill="#bccde5" />
<rect x="273" y="128" width="1263" height="2" fill="#b9c9db" />
<rect x="273" y="146.8" width="1263" height="1.2" fill="#d6e0ec" />
<rect x="277" y="131" width="44" height="17" fill="#eaf1fa" rx="2"/>
<text x="282" y="143" font-size="9.5" fill="#222" text-anchor="start" textLength="34" lengthAdjust="spacingAndGlyphs" >Eingabe</text>
<text x="333" y="143" font-size="9.5" fill="#222" text-anchor="start" textLength="40" lengthAdjust="spacingAndGlyphs" >Dokument</text>
<rect x="273" y="148" width="1263" height="1.6" fill="#8a8a8a" />
<rect x="274" y="149.5" width="1262" height="673" fill="#ffffff" />
<text x="281" y="167" font-size="10.5" fill="#333" text-anchor="start" textLength="350" lengthAdjust="spacingAndGlyphs" >Stahlträger über 2 Felder , DIN EN 1993:2015 , Stahl S235 , mit Eigengewicht</text>
<text x="281" y="181.5" font-size="10.5" fill="#333" text-anchor="start" textLength="195" lengthAdjust="spacingAndGlyphs" >seitliche Halterung: kontinuierlich gehalten</text>
<text x="365" y="317.5" font-size="9.5" fill="#333" text-anchor="start" textLength="42" lengthAdjust="spacingAndGlyphs" >horizontal</text>
<rect x="378.2" y="322.2" width="1035.8" height="22.2" fill="#fbe5e7" stroke="#b85a64" stroke-width="1.2" />
<line x1="378.2" y1="322.5" x2="378.2" y2="340" stroke="#7c3a48" stroke-width="1" />
<path d="M376.40 338.00 L380.00 338.00 L378.20 343.00 Z" fill="#6a2a3a" />
<line x1="394.384375" y1="322.5" x2="394.384375" y2="340" stroke="#7c3a48" stroke-width="1" />
<path d="M392.58 338.00 L396.18 338.00 L394.38 343.00 Z" fill="#6a2a3a" />
<line x1="410.56874999999997" y1="322.5" x2="410.56874999999997" y2="340" stroke="#7c3a48" stroke-width="1" />
<path d="M408.77 338.00 L412.37 338.00 L410.57 343.00 Z" fill="#6a2a3a" />
<line x1="426.75312499999995" y1="322.5" x2="426.75312499999995" y2="340" stroke="#7c3a48" stroke-width="1" />
<path d="M424.95 338.00 L428.55 338.00 L426.75 343.00 Z" fill="#6a2a3a" />
<line x1="442.9375" y1="322.5" x2="442.9375" y2="340" stroke="#7c3a48" stroke-width="1" />
<path d="M441.14 338.00 L444.74 338.00 L442.94 343.00 Z" fill="#6a2a3a" />
<line x1="459.121875" y1="322.5" x2="459.121875" y2="340" stroke="#7c3a48" stroke-width="1" />
<path d="M457.32 338.00 L460.92 338.00 L459.12 343.00 Z" fill="#6a2a3a" />
<line x1="475.30625" y1="322.5" x2="475.30625" y2="340" stroke="#7c3a48" stroke-width="1" />
<path d="M473.51 338.00 L477.11 338.00 L475.31 343.00 Z" fill="#6a2a3a" />
<line x1="491.49062499999997" y1="322.5" x2="491.49062499999997" y2="340" stroke="#7c3a48" stroke-width="1" />
<path d="M489.69 338.00 L493.29 338.00 L491.49 343.00 Z" fill="#6a2a3a" />
<line x1="507.67499999999995" y1="322.5" x2="507.67499999999995" y2="340" stroke="#7c3a48" stroke-width="1" />
<path d="M505.87 338.00 L509.47 338.00 L507.67 343.00 Z" fill="#6a2a3a" />
<line x1="523.859375" y1="322.5" x2="523.859375" y2="340" stroke="#7c3a48" stroke-width="1" />
<path d="M522.06 338.00 L525.66 338.00 L523.86 343.00 Z" fill="#6a2a3a" />
<line x1="540.04375" y1="322.5" x2="540.04375" y2="340" stroke="#7c3a48" stroke-width="1" />
<path d="M538.24 338.00 L541.84 338.00 L540.04 343.00 Z" fill="#6a2a3a" />
<line x1="556.228125" y1="322.5" x2="556.228125" y2="340" stroke="#7c3a48" stroke-width="1" />
<path d="M554.43 338.00 L558.03 338.00 L556.23 343.00 Z" fill="#6a2a3a" />
<line x1="572.4124999999999" y1="322.5" x2="572.4124999999999" y2="340" stroke="#7c3a48" stroke-width="1" />
<path d="M570.61 338.00 L574.21 338.00 L572.41 343.00 Z" fill="#6a2a3a" />
<line x1="588.596875" y1="322.5" x2="588.596875" y2="340" stroke="#7c3a48" stroke-width="1" />
<path d="M586.80 338.00 L590.40 338.00 L588.60 343.00 Z" fill="#6a2a3a" />
<line x1="604.78125" y1="322.5" x2="604.78125" y2="340" stroke="#7c3a48" stroke-width="1" />
<path d="M602.98 338.00 L606.58 338.00 L604.78 343.00 Z" fill="#6a2a3a" />
<line x1="620.965625" y1="322.5" x2="620.965625" y2="340" stroke="#7c3a48" stroke-width="1" />
<path d="M619.17 338.00 L622.77 338.00 L620.97 343.00 Z" fill="#6a2a3a" />
<line x1="637.15" y1="322.5" x2="637.15" y2="340" stroke="#7c3a48" stroke-width="1" />
<path d="M635.35 338.00 L638.95 338.00 L637.15 343.00 Z" fill="#6a2a3a" />
<line x1="653.3343749999999" y1="322.5" x2="653.3343749999999" y2="340" stroke="#7c3a48" stroke-width="1" />
<path d="M651.53 338.00 L655.13 338.00 L653.33 343.00 Z" fill="#6a2a3a" />
<line x1="669.51875" y1="322.5" x2="669.51875" y2="340" stroke="#7c3a48" stroke-width="1" />
<path d="M667.72 338.00 L671.32 338.00 L669.52 343.00 Z" fill="#6a2a3a" />
<line x1="685.703125" y1="322.5" x2="685.703125" y2="340" stroke="#7c3a48" stroke-width="1" />
<path d="M683.90 338.00 L687.50 338.00 L685.70 343.00 Z" fill="#6a2a3a" />
<line x1="701.8875" y1="322.5" x2="701.8875" y2="340" stroke="#7c3a48" stroke-width="1" />
<path d="M700.09 338.00 L703.69 338.00 L701.89 343.00 Z" fill="#6a2a3a" />
<line x1="718.071875" y1="322.5" x2="718.071875" y2="340" stroke="#7c3a48" stroke-width="1" />
<path d="M716.27 338.00 L719.87 338.00 L718.07 343.00 Z" fill="#6a2a3a" />
<line x1="734.2562499999999" y1="322.5" x2="734.2562499999999" y2="340" stroke="#7c3a48" stroke-width="1" />
<path d="M732.46 338.00 L736.06 338.00 L734.26 343.00 Z" fill="#6a2a3a" />
<line x1="750.440625" y1="322.5" x2="750.440625" y2="340" stroke="#7c3a48" stroke-width="1" />
<path d="M748.64 338.00 L752.24 338.00 L750.44 343.00 Z" fill="#6a2a3a" />
<line x1="766.625" y1="322.5" x2="766.625" y2="340" stroke="#7c3a48" stroke-width="1" />
<path d="M764.83 338.00 L768.42 338.00 L766.62 343.00 Z" fill="#6a2a3a" />
<line x1="782.809375" y1="322.5" x2="782.809375" y2="340" stroke="#7c3a48" stroke-width="1" />
<path d="M781.01 338.00 L784.61 338.00 L782.81 343.00 Z" fill="#6a2a3a" />
<line x1="798.99375" y1="322.5" x2="798.99375" y2="340" stroke="#7c3a48" stroke-width="1" />
<path d="M797.19 338.00 L800.79 338.00 L798.99 343.00 Z" fill="#6a2a3a" />
<line x1="815.1781249999999" y1="322.5" x2="815.1781249999999" y2="340" stroke="#7c3a48" stroke-width="1" />
<path d="M813.38 338.00 L816.98 338.00 L815.18 343.00 Z" fill="#6a2a3a" />
<line x1="831.3625" y1="322.5" x2="831.3625" y2="340" stroke="#7c3a48" stroke-width="1" />
<path d="M829.56 338.00 L833.16 338.00 L831.36 343.00 Z" fill="#6a2a3a" />
<line x1="847.546875" y1="322.5" x2="847.546875" y2="340" stroke="#7c3a48" stroke-width="1" />
<path d="M845.75 338.00 L849.35 338.00 L847.55 343.00 Z" fill="#6a2a3a" />
<line x1="863.73125" y1="322.5" x2="863.73125" y2="340" stroke="#7c3a48" stroke-width="1" />
<path d="M861.93 338.00 L865.53 338.00 L863.73 343.00 Z" fill="#6a2a3a" />
<line x1="879.915625" y1="322.5" x2="879.915625" y2="340" stroke="#7c3a48" stroke-width="1" />
<path d="M878.12 338.00 L881.72 338.00 L879.92 343.00 Z" fill="#6a2a3a" />
<line x1="896.0999999999999" y1="322.5" x2="896.0999999999999" y2="340" stroke="#7c3a48" stroke-width="1" />
<path d="M894.30 338.00 L897.90 338.00 L896.10 343.00 Z" fill="#6a2a3a" />
<line x1="912.284375" y1="322.5" x2="912.284375" y2="340" stroke="#7c3a48" stroke-width="1" />
<path d="M910.48 338.00 L914.08 338.00 L912.28 343.00 Z" fill="#6a2a3a" />
<line x1="928.46875" y1="322.5" x2="928.46875" y2="340" stroke="#7c3a48" stroke-width="1" />
<path d="M926.67 338.00 L930.27 338.00 L928.47 343.00 Z" fill="#6a2a3a" />
<line x1="944.653125" y1="322.5" x2="944.653125" y2="340" stroke="#7c3a48" stroke-width="1" />
<path d="M942.85 338.00 L946.45 338.00 L944.65 343.00 Z" fill="#6a2a3a" />
<line x1="960.8374999999999" y1="322.5" x2="960.8374999999999" y2="340" stroke="#7c3a48" stroke-width="1" />
<path d="M959.04 338.00 L962.64 338.00 L960.84 343.00 Z" fill="#6a2a3a" />
<line x1="977.0218749999999" y1="322.5" x2="977.0218749999999" y2="340" stroke="#7c3a48" stroke-width="1" />
<path d="M975.22 338.00 L978.82 338.00 L977.02 343.00 Z" fill="#6a2a3a" />
<line x1="993.20625" y1="322.5" x2="993.20625" y2="340" stroke="#7c3a48" stroke-width="1" />
<path d="M991.41 338.00 L995.01 338.00 L993.21 343.00 Z" fill="#6a2a3a" />
<line x1="1009.390625" y1="322.5" x2="1009.390625" y2="340" stroke="#7c3a48" stroke-width="1" />
<path d="M1007.59 338.00 L1011.19 338.00 L1009.39 343.00 Z" fill="#6a2a3a" />
<line x1="1025.575" y1="322.5" x2="1025.575" y2="340" stroke="#7c3a48" stroke-width="1" />
<path d="M1023.78 338.00 L1027.38 338.00 L1025.58 343.00 Z" fill="#6a2a3a" />
<line x1="1041.7593749999999" y1="322.5" x2="1041.7593749999999" y2="340" stroke="#7c3a48" stroke-width="1" />
<path d="M1039.96 338.00 L1043.56 338.00 L1041.76 343.00 Z" fill="#6a2a3a" />
<line x1="1057.94375" y1="322.5" x2="1057.94375" y2="340" stroke="#7c3a48" stroke-width="1" />
<path d="M1056.14 338.00 L1059.74 338.00 L1057.94 343.00 Z" fill="#6a2a3a" />
<line x1="1074.128125" y1="322.5" x2="1074.128125" y2="340" stroke="#7c3a48" stroke-width="1" />
<path d="M1072.33 338.00 L1075.93 338.00 L1074.13 343.00 Z" fill="#6a2a3a" />
<line x1="1090.3125" y1="322.5" x2="1090.3125" y2="340" stroke="#7c3a48" stroke-width="1" />
<path d="M1088.51 338.00 L1092.11 338.00 L1090.31 343.00 Z" fill="#6a2a3a" />
<line x1="1106.496875" y1="322.5" x2="1106.496875" y2="340" stroke="#7c3a48" stroke-width="1" />
<path d="M1104.70 338.00 L1108.30 338.00 L1106.50 343.00 Z" fill="#6a2a3a" />
<line x1="1122.6812499999999" y1="322.5" x2="1122.6812499999999" y2="340" stroke="#7c3a48" stroke-width="1" />
<path d="M1120.88 338.00 L1124.48 338.00 L1122.68 343.00 Z" fill="#6a2a3a" />
<line x1="1138.865625" y1="322.5" x2="1138.865625" y2="340" stroke="#7c3a48" stroke-width="1" />
<path d="M1137.07 338.00 L1140.67 338.00 L1138.87 343.00 Z" fill="#6a2a3a" />
<line x1="1155.05" y1="322.5" x2="1155.05" y2="340" stroke="#7c3a48" stroke-width="1" />
<path d="M1153.25 338.00 L1156.85 338.00 L1155.05 343.00 Z" fill="#6a2a3a" />
<line x1="1171.234375" y1="322.5" x2="1171.234375" y2="340" stroke="#7c3a48" stroke-width="1" />
<path d="M1169.43 338.00 L1173.03 338.00 L1171.23 343.00 Z" fill="#6a2a3a" />
<line x1="1187.41875" y1="322.5" x2="1187.41875" y2="340" stroke="#7c3a48" stroke-width="1" />
<path d="M1185.62 338.00 L1189.22 338.00 L1187.42 343.00 Z" fill="#6a2a3a" />
<line x1="1203.6031249999999" y1="322.5" x2="1203.6031249999999" y2="340" stroke="#7c3a48" stroke-width="1" />
<path d="M1201.80 338.00 L1205.40 338.00 L1203.60 343.00 Z" fill="#6a2a3a" />
<line x1="1219.7875" y1="322.5" x2="1219.7875" y2="340" stroke="#7c3a48" stroke-width="1" />
<path d="M1217.99 338.00 L1221.59 338.00 L1219.79 343.00 Z" fill="#6a2a3a" />
<line x1="1235.971875" y1="322.5" x2="1235.971875" y2="340" stroke="#7c3a48" stroke-width="1" />
<path d="M1234.17 338.00 L1237.77 338.00 L1235.97 343.00 Z" fill="#6a2a3a" />
<line x1="1252.15625" y1="322.5" x2="1252.15625" y2="340" stroke="#7c3a48" stroke-width="1" />
<path d="M1250.36 338.00 L1253.96 338.00 L1252.16 343.00 Z" fill="#6a2a3a" />
<line x1="1268.340625" y1="322.5" x2="1268.340625" y2="340" stroke="#7c3a48" stroke-width="1" />
<path d="M1266.54 338.00 L1270.14 338.00 L1268.34 343.00 Z" fill="#6a2a3a" />
<line x1="1284.5249999999999" y1="322.5" x2="1284.5249999999999" y2="340" stroke="#7c3a48" stroke-width="1" />
<path d="M1282.72 338.00 L1286.32 338.00 L1284.52 343.00 Z" fill="#6a2a3a" />
<line x1="1300.709375" y1="322.5" x2="1300.709375" y2="340" stroke="#7c3a48" stroke-width="1" />
<path d="M1298.91 338.00 L1302.51 338.00 L1300.71 343.00 Z" fill="#6a2a3a" />
<line x1="1316.89375" y1="322.5" x2="1316.89375" y2="340" stroke="#7c3a48" stroke-width="1" />
<path d="M1315.09 338.00 L1318.69 338.00 L1316.89 343.00 Z" fill="#6a2a3a" />
<line x1="1333.078125" y1="322.5" x2="1333.078125" y2="340" stroke="#7c3a48" stroke-width="1" />
<path d="M1331.28 338.00 L1334.88 338.00 L1333.08 343.00 Z" fill="#6a2a3a" />
<line x1="1349.2625" y1="322.5" x2="1349.2625" y2="340" stroke="#7c3a48" stroke-width="1" />
<path d="M1347.46 338.00 L1351.06 338.00 L1349.26 343.00 Z" fill="#6a2a3a" />
<line x1="1365.4468749999999" y1="322.5" x2="1365.4468749999999" y2="340" stroke="#7c3a48" stroke-width="1" />
<path d="M1363.65 338.00 L1367.25 338.00 L1365.45 343.00 Z" fill="#6a2a3a" />
<line x1="1381.63125" y1="322.5" x2="1381.63125" y2="340" stroke="#7c3a48" stroke-width="1" />
<path d="M1379.83 338.00 L1383.43 338.00 L1381.63 343.00 Z" fill="#6a2a3a" />
<line x1="1397.815625" y1="322.5" x2="1397.815625" y2="340" stroke="#7c3a48" stroke-width="1" />
<path d="M1396.02 338.00 L1399.62 338.00 L1397.82 343.00 Z" fill="#6a2a3a" />
<line x1="1414.0" y1="322.5" x2="1414.0" y2="340" stroke="#7c3a48" stroke-width="1" />
<path d="M1412.20 338.00 L1415.80 338.00 L1414.00 343.00 Z" fill="#6a2a3a" />
<rect x="882.5" y="327.3" width="26" height="12.5" fill="#ffffff" stroke="#b4b4b4" stroke-width="1" />
<text x="895.5" y="337.0" font-size="9.5" fill="#3a3a3a" text-anchor="middle" textLength="17" lengthAdjust="spacingAndGlyphs" >7,50</text>
<text x="365" y="361" font-size="9.5" fill="#333" text-anchor="start" textLength="30" lengthAdjust="spacingAndGlyphs" >vertikal</text>
<path d="M472.3 430.9 L943.0 407.4 L1414.0 430.9 Z" fill="#fbe5e7" stroke="#b04a58" stroke-width="1.2" />
<path d="M519.29 427.97 L522.69 427.97 L520.99 430.40 Z" fill="#7a2030" />
<path d="M535.52 427.16 L538.92 427.16 L537.22 430.40 Z" fill="#7a2030" />
<path d="M551.76 426.35 L555.16 426.35 L553.46 430.40 Z" fill="#7a2030" />
<path d="M567.99 425.60 L571.39 425.60 L569.69 430.40 Z" fill="#7a2030" />
<line x1="585.9172413793103" y1="425.22758620689655" x2="585.9172413793103" y2="426.9" stroke="#8a2a3a" stroke-width="1" />
<path d="M584.22 425.60 L587.62 425.60 L585.92 430.40 Z" fill="#7a2030" />
<line x1="602.148275862069" y1="424.4172413793103" x2="602.148275862069" y2="426.9" stroke="#8a2a3a" stroke-width="1" />
<path d="M600.45 425.60 L603.85 425.60 L602.15 430.40 Z" fill="#7a2030" />
<line x1="618.3793103448276" y1="423.6068965517241" x2="618.3793103448276" y2="426.9" stroke="#8a2a3a" stroke-width="1" />
<path d="M616.68 425.60 L620.08 425.60 L618.38 430.40 Z" fill="#7a2030" />
<line x1="634.6103448275862" y1="422.7965517241379" x2="634.6103448275862" y2="426.9" stroke="#8a2a3a" stroke-width="1" />
<path d="M632.91 425.60 L636.31 425.60 L634.61 430.40 Z" fill="#7a2030" />
<line x1="650.8413793103448" y1="421.9862068965517" x2="650.8413793103448" y2="426.9" stroke="#8a2a3a" stroke-width="1" />
<path d="M649.14 425.60 L652.54 425.60 L650.84 430.40 Z" fill="#7a2030" />
<line x1="667.0724137931035" y1="421.1758620689655" x2="667.0724137931035" y2="426.9" stroke="#8a2a3a" stroke-width="1" />
<path d="M665.37 425.60 L668.77 425.60 L667.07 430.40 Z" fill="#7a2030" />
<line x1="683.3034482758621" y1="420.3655172413793" x2="683.3034482758621" y2="426.9" stroke="#8a2a3a" stroke-width="1" />
<path d="M681.60 425.60 L685.00 425.60 L683.30 430.40 Z" fill="#7a2030" />
<line x1="699.5344827586207" y1="419.55517241379306" x2="699.5344827586207" y2="426.9" stroke="#8a2a3a" stroke-width="1" />
<path d="M697.83 425.60 L701.23 425.60 L699.53 430.40 Z" fill="#7a2030" />
<line x1="715.7655172413793" y1="418.7448275862069" x2="715.7655172413793" y2="426.9" stroke="#8a2a3a" stroke-width="1" />
<path d="M714.07 425.60 L717.47 425.60 L715.77 430.40 Z" fill="#7a2030" />
<line x1="731.9965517241379" y1="417.9344827586207" x2="731.9965517241379" y2="426.9" stroke="#8a2a3a" stroke-width="1" />
<path d="M730.30 425.60 L733.70 425.60 L732.00 430.40 Z" fill="#7a2030" />
<line x1="748.2275862068966" y1="417.12413793103445" x2="748.2275862068966" y2="426.9" stroke="#8a2a3a" stroke-width="1" />
<path d="M746.53 425.60 L749.93 425.60 L748.23 430.40 Z" fill="#7a2030" />
<line x1="764.4586206896552" y1="416.31379310344823" x2="764.4586206896552" y2="426.9" stroke="#8a2a3a" stroke-width="1" />
<path d="M762.76 425.60 L766.16 425.60 L764.46 430.40 Z" fill="#7a2030" />
<line x1="780.6896551724137" y1="415.50344827586207" x2="780.6896551724137" y2="426.9" stroke="#8a2a3a" stroke-width="1" />
<path d="M778.99 425.60 L782.39 425.60 L780.69 430.40 Z" fill="#7a2030" />
<line x1="796.9206896551724" y1="414.69310344827585" x2="796.9206896551724" y2="426.9" stroke="#8a2a3a" stroke-width="1" />
<path d="M795.22 425.60 L798.62 425.60 L796.92 430.40 Z" fill="#7a2030" />
<line x1="813.1517241379311" y1="413.88275862068963" x2="813.1517241379311" y2="426.9" stroke="#8a2a3a" stroke-width="1" />
<path d="M811.45 425.60 L814.85 425.60 L813.15 430.40 Z" fill="#7a2030" />
<line x1="829.3827586206896" y1="413.0724137931034" x2="829.3827586206896" y2="426.9" stroke="#8a2a3a" stroke-width="1" />
<path d="M827.68 425.60 L831.08 425.60 L829.38 430.40 Z" fill="#7a2030" />
<line x1="845.6137931034482" y1="412.26206896551724" x2="845.6137931034482" y2="426.9" stroke="#8a2a3a" stroke-width="1" />
<path d="M843.91 425.60 L847.31 425.60 L845.61 430.40 Z" fill="#7a2030" />
<line x1="861.844827586207" y1="411.451724137931" x2="861.844827586207" y2="426.9" stroke="#8a2a3a" stroke-width="1" />
<path d="M860.14 425.60 L863.54 425.60 L861.84 430.40 Z" fill="#7a2030" />
<line x1="878.0758620689655" y1="410.6413793103448" x2="878.0758620689655" y2="426.9" stroke="#8a2a3a" stroke-width="1" />
<path d="M876.38 425.60 L879.78 425.60 L878.08 430.40 Z" fill="#7a2030" />
<line x1="894.3068965517241" y1="409.8310344827586" x2="894.3068965517241" y2="426.9" stroke="#8a2a3a" stroke-width="1" />
<path d="M892.61 425.60 L896.01 425.60 L894.31 430.40 Z" fill="#7a2030" />
<line x1="910.5379310344828" y1="409.0206896551724" x2="910.5379310344828" y2="426.9" stroke="#8a2a3a" stroke-width="1" />
<path d="M908.84 425.60 L912.24 425.60 L910.54 430.40 Z" fill="#7a2030" />
<line x1="926.7689655172414" y1="408.2103448275862" x2="926.7689655172414" y2="426.9" stroke="#8a2a3a" stroke-width="1" />
<path d="M925.07 425.60 L928.47 425.60 L926.77 430.40 Z" fill="#7a2030" />
<line x1="943.0" y1="407.4" x2="943.0" y2="426.9" stroke="#8a2a3a" stroke-width="1" />
<path d="M941.30 425.60 L944.70 425.60 L943.00 430.40 Z" fill="#7a2030" />
<line x1="959.2310344827586" y1="408.2098286843839" x2="959.2310344827586" y2="426.9" stroke="#8a2a3a" stroke-width="1" />
<path d="M957.53 425.60 L960.93 425.60 L959.23 430.40 Z" fill="#7a2030" />
<line x1="975.4620689655172" y1="409.0196573687678" x2="975.4620689655172" y2="426.9" stroke="#8a2a3a" stroke-width="1" />
<path d="M973.76 425.60 L977.16 425.60 L975.46 430.40 Z" fill="#7a2030" />
<line x1="991.6931034482759" y1="409.82948605315175" x2="991.6931034482759" y2="426.9" stroke="#8a2a3a" stroke-width="1" />
<path d="M989.99 425.60 L993.39 425.60 L991.69 430.40 Z" fill="#7a2030" />
<line x1="1007.9241379310345" y1="410.63931473753564" x2="1007.9241379310345" y2="426.9" stroke="#8a2a3a" stroke-width="1" />
<path d="M1006.22 425.60 L1009.62 425.60 L1007.92 430.40 Z" fill="#7a2030" />
<line x1="1024.155172413793" y1="411.4491434219196" x2="1024.155172413793" y2="426.9" stroke="#8a2a3a" stroke-width="1" />
<path d="M1022.46 425.60 L1025.86 425.60 L1024.16 430.40 Z" fill="#7a2030" />
<line x1="1040.3862068965518" y1="412.25897210630353" x2="1040.3862068965518" y2="426.9" stroke="#8a2a3a" stroke-width="1" />
<path d="M1038.69 425.60 L1042.09 425.60 L1040.39 430.40 Z" fill="#7a2030" />
<line x1="1056.6172413793104" y1="413.0688007906874" x2="1056.6172413793104" y2="426.9" stroke="#8a2a3a" stroke-width="1" />
<path d="M1054.92 425.60 L1058.32 425.60 L1056.62 430.40 Z" fill="#7a2030" />
<line x1="1072.848275862069" y1="413.87862947507136" x2="1072.848275862069" y2="426.9" stroke="#8a2a3a" stroke-width="1" />
<path d="M1071.15 425.60 L1074.55 425.60 L1072.85 430.40 Z" fill="#7a2030" />
<line x1="1089.0793103448275" y1="414.68845815945525" x2="1089.0793103448275" y2="426.9" stroke="#8a2a3a" stroke-width="1" />
<path d="M1087.38 425.60 L1090.78 425.60 L1089.08 430.40 Z" fill="#7a2030" />
<line x1="1105.3103448275863" y1="415.4982868438392" x2="1105.3103448275863" y2="426.9" stroke="#8a2a3a" stroke-width="1" />
<path d="M1103.61 425.60 L1107.01 425.60 L1105.31 430.40 Z" fill="#7a2030" />
<line x1="1121.5413793103448" y1="416.30811552822314" x2="1121.5413793103448" y2="426.9" stroke="#8a2a3a" stroke-width="1" />
<path d="M1119.84 425.60 L1123.24 425.60 L1121.54 430.40 Z" fill="#7a2030" />
<line x1="1137.7724137931034" y1="417.11794421260703" x2="1137.7724137931034" y2="426.9" stroke="#8a2a3a" stroke-width="1" />
<path d="M1136.07 425.60 L1139.47 425.60 L1137.77 430.40 Z" fill="#7a2030" />
<line x1="1154.003448275862" y1="417.927772896991" x2="1154.003448275862" y2="426.9" stroke="#8a2a3a" stroke-width="1" />
<path d="M1152.30 425.60 L1155.70 425.60 L1154.00 430.40 Z" fill="#7a2030" />
<line x1="1170.2344827586207" y1="418.7376015813749" x2="1170.2344827586207" y2="426.9" stroke="#8a2a3a" stroke-width="1" />
<path d="M1168.53 425.60 L1171.93 425.60 L1170.23 430.40 Z" fill="#7a2030" />
<line x1="1186.4655172413793" y1="419.5474302657588" x2="1186.4655172413793" y2="426.9" stroke="#8a2a3a" stroke-width="1" />
<path d="M1184.77 425.60 L1188.17 425.60 L1186.47 430.40 Z" fill="#7a2030" />
<line x1="1202.6965517241379" y1="420.35725895014275" x2="1202.6965517241379" y2="426.9" stroke="#8a2a3a" stroke-width="1" />
<path d="M1201.00 425.60 L1204.40 425.60 L1202.70 430.40 Z" fill="#7a2030" />
<line x1="1218.9275862068964" y1="421.16708763452664" x2="1218.9275862068964" y2="426.9" stroke="#8a2a3a" stroke-width="1" />
<path d="M1217.23 425.60 L1220.63 425.60 L1218.93 430.40 Z" fill="#7a2030" />
<line x1="1235.1586206896552" y1="421.9769163189106" x2="1235.1586206896552" y2="426.9" stroke="#8a2a3a" stroke-width="1" />
<path d="M1233.46 425.60 L1236.86 425.60 L1235.16 430.40 Z" fill="#7a2030" />
<line x1="1251.3896551724138" y1="422.7867450032945" x2="1251.3896551724138" y2="426.9" stroke="#8a2a3a" stroke-width="1" />
<path d="M1249.69 425.60 L1253.09 425.60 L1251.39 430.40 Z" fill="#7a2030" />
<line x1="1267.6206896551723" y1="423.5965736876784" x2="1267.6206896551723" y2="426.9" stroke="#8a2a3a" stroke-width="1" />
<path d="M1265.92 425.60 L1269.32 425.60 L1267.62 430.40 Z" fill="#7a2030" />
<line x1="1283.8517241379311" y1="424.40640237206236" x2="1283.8517241379311" y2="426.9" stroke="#8a2a3a" stroke-width="1" />
<path d="M1282.15 425.60 L1285.55 425.60 L1283.85 430.40 Z" fill="#7a2030" />
<line x1="1300.0827586206897" y1="425.2162310564463" x2="1300.0827586206897" y2="426.9" stroke="#8a2a3a" stroke-width="1" />
<path d="M1298.38 425.60 L1301.78 425.60 L1300.08 430.40 Z" fill="#7a2030" />
<path d="M1314.61 425.60 L1318.01 425.60 L1316.31 430.40 Z" fill="#7a2030" />
<path d="M1330.84 426.34 L1334.24 426.34 L1332.54 430.40 Z" fill="#7a2030" />
<path d="M1347.08 427.15 L1350.48 427.15 L1348.78 430.40 Z" fill="#7a2030" />
<path d="M1363.31 427.96 L1366.71 427.96 L1365.01 430.40 Z" fill="#7a2030" />
<rect x="943" y="411.8" width="26" height="12.5" fill="#ffffff" stroke="#b4b4b4" stroke-width="1" />
<text x="956.0" y="421.5" font-size="9.5" fill="#3a3a3a" text-anchor="middle" textLength="17" lengthAdjust="spacingAndGlyphs" >8,00</text>
<rect x="378.2" y="434" width="1035.8" height="38" fill="#fce6e9" stroke="#b04e5c" stroke-width="1.2" />
<line x1="378.2" y1="472.3" x2="1414.0" y2="472.3" stroke="#8a3444" stroke-width="1.2" />
<line x1="378.2" y1="434.5" x2="378.2" y2="462" stroke="#a42a3a" stroke-width="1.6" />
<path d="M375.30 461.50 L381.10 461.50 L378.20 471.50 Z" fill="#7e1626" />
<line x1="394.384375" y1="434.5" x2="394.384375" y2="462" stroke="#a42a3a" stroke-width="1.6" />
<path d="M391.48 461.50 L397.28 461.50 L394.38 471.50 Z" fill="#7e1626" />
<line x1="410.56874999999997" y1="434.5" x2="410.56874999999997" y2="462" stroke="#a42a3a" stroke-width="1.6" />
<path d="M407.67 461.50 L413.47 461.50 L410.57 471.50 Z" fill="#7e1626" />
<line x1="426.75312499999995" y1="434.5" x2="426.75312499999995" y2="462" stroke="#a42a3a" stroke-width="1.6" />
<path d="M423.85 461.50 L429.65 461.50 L426.75 471.50 Z" fill="#7e1626" />
<line x1="442.9375" y1="434.5" x2="442.9375" y2="462" stroke="#a42a3a" stroke-width="1.6" />
<path d="M440.04 461.50 L445.84 461.50 L442.94 471.50 Z" fill="#7e1626" />
<line x1="459.121875" y1="434.5" x2="459.121875" y2="462" stroke="#a42a3a" stroke-width="1.6" />
<path d="M456.22 461.50 L462.02 461.50 L459.12 471.50 Z" fill="#7e1626" />
<line x1="475.30625" y1="434.5" x2="475.30625" y2="462" stroke="#a42a3a" stroke-width="1.6" />
<path d="M472.41 461.50 L478.21 461.50 L475.31 471.50 Z" fill="#7e1626" />
<line x1="491.49062499999997" y1="434.5" x2="491.49062499999997" y2="462" stroke="#a42a3a" stroke-width="1.6" />
<path d="M488.59 461.50 L494.39 461.50 L491.49 471.50 Z" fill="#7e1626" />
<line x1="507.67499999999995" y1="434.5" x2="507.67499999999995" y2="462" stroke="#a42a3a" stroke-width="1.6" />
<path d="M504.77 461.50 L510.57 461.50 L507.67 471.50 Z" fill="#7e1626" />
<line x1="523.859375" y1="434.5" x2="523.859375" y2="462" stroke="#a42a3a" stroke-width="1.6" />
<path d="M520.96 461.50 L526.76 461.50 L523.86 471.50 Z" fill="#7e1626" />
<line x1="540.04375" y1="434.5" x2="540.04375" y2="462" stroke="#a42a3a" stroke-width="1.6" />
<path d="M537.14 461.50 L542.94 461.50 L540.04 471.50 Z" fill="#7e1626" />
<line x1="556.228125" y1="434.5" x2="556.228125" y2="462" stroke="#a42a3a" stroke-width="1.6" />
<path d="M553.33 461.50 L559.13 461.50 L556.23 471.50 Z" fill="#7e1626" />
<line x1="572.4124999999999" y1="434.5" x2="572.4124999999999" y2="462" stroke="#a42a3a" stroke-width="1.6" />
<path d="M569.51 461.50 L575.31 461.50 L572.41 471.50 Z" fill="#7e1626" />
<line x1="588.596875" y1="434.5" x2="588.596875" y2="462" stroke="#a42a3a" stroke-width="1.6" />
<path d="M585.70 461.50 L591.50 461.50 L588.60 471.50 Z" fill="#7e1626" />
<line x1="604.78125" y1="434.5" x2="604.78125" y2="462" stroke="#a42a3a" stroke-width="1.6" />
<path d="M601.88 461.50 L607.68 461.50 L604.78 471.50 Z" fill="#7e1626" />
<line x1="620.965625" y1="434.5" x2="620.965625" y2="462" stroke="#a42a3a" stroke-width="1.6" />
<path d="M618.07 461.50 L623.87 461.50 L620.97 471.50 Z" fill="#7e1626" />
<line x1="637.15" y1="434.5" x2="637.15" y2="462" stroke="#a42a3a" stroke-width="1.6" />
<path d="M634.25 461.50 L640.05 461.50 L637.15 471.50 Z" fill="#7e1626" />
<line x1="653.3343749999999" y1="434.5" x2="653.3343749999999" y2="462" stroke="#a42a3a" stroke-width="1.6" />
<path d="M650.43 461.50 L656.23 461.50 L653.33 471.50 Z" fill="#7e1626" />
<line x1="669.51875" y1="434.5" x2="669.51875" y2="462" stroke="#a42a3a" stroke-width="1.6" />
<path d="M666.62 461.50 L672.42 461.50 L669.52 471.50 Z" fill="#7e1626" />
<line x1="685.703125" y1="434.5" x2="685.703125" y2="462" stroke="#a42a3a" stroke-width="1.6" />
<path d="M682.80 461.50 L688.60 461.50 L685.70 471.50 Z" fill="#7e1626" />
<line x1="701.8875" y1="434.5" x2="701.8875" y2="462" stroke="#a42a3a" stroke-width="1.6" />
<path d="M698.99 461.50 L704.79 461.50 L701.89 471.50 Z" fill="#7e1626" />
<line x1="718.071875" y1="434.5" x2="718.071875" y2="462" stroke="#a42a3a" stroke-width="1.6" />
<path d="M715.17 461.50 L720.97 461.50 L718.07 471.50 Z" fill="#7e1626" />
<line x1="734.2562499999999" y1="434.5" x2="734.2562499999999" y2="462" stroke="#a42a3a" stroke-width="1.6" />
<path d="M731.36 461.50 L737.16 461.50 L734.26 471.50 Z" fill="#7e1626" />
<line x1="750.440625" y1="434.5" x2="750.440625" y2="462" stroke="#a42a3a" stroke-width="1.6" />
<path d="M747.54 461.50 L753.34 461.50 L750.44 471.50 Z" fill="#7e1626" />
<line x1="766.625" y1="434.5" x2="766.625" y2="462" stroke="#a42a3a" stroke-width="1.6" />
<path d="M763.73 461.50 L769.52 461.50 L766.62 471.50 Z" fill="#7e1626" />
<line x1="782.809375" y1="434.5" x2="782.809375" y2="462" stroke="#a42a3a" stroke-width="1.6" />
<path d="M779.91 461.50 L785.71 461.50 L782.81 471.50 Z" fill="#7e1626" />
<line x1="798.99375" y1="434.5" x2="798.99375" y2="462" stroke="#a42a3a" stroke-width="1.6" />
<path d="M796.09 461.50 L801.89 461.50 L798.99 471.50 Z" fill="#7e1626" />
<line x1="815.1781249999999" y1="434.5" x2="815.1781249999999" y2="462" stroke="#a42a3a" stroke-width="1.6" />
<path d="M812.28 461.50 L818.08 461.50 L815.18 471.50 Z" fill="#7e1626" />
<line x1="831.3625" y1="434.5" x2="831.3625" y2="462" stroke="#a42a3a" stroke-width="1.6" />
<path d="M828.46 461.50 L834.26 461.50 L831.36 471.50 Z" fill="#7e1626" />
<line x1="847.546875" y1="434.5" x2="847.546875" y2="462" stroke="#a42a3a" stroke-width="1.6" />
<path d="M844.65 461.50 L850.45 461.50 L847.55 471.50 Z" fill="#7e1626" />
<line x1="863.73125" y1="434.5" x2="863.73125" y2="462" stroke="#a42a3a" stroke-width="1.6" />
<path d="M860.83 461.50 L866.63 461.50 L863.73 471.50 Z" fill="#7e1626" />
<line x1="879.915625" y1="434.5" x2="879.915625" y2="462" stroke="#a42a3a" stroke-width="1.6" />
<path d="M877.02 461.50 L882.82 461.50 L879.92 471.50 Z" fill="#7e1626" />
<line x1="896.0999999999999" y1="434.5" x2="896.0999999999999" y2="462" stroke="#a42a3a" stroke-width="1.6" />
<path d="M893.20 461.50 L899.00 461.50 L896.10 471.50 Z" fill="#7e1626" />
<line x1="912.284375" y1="434.5" x2="912.284375" y2="462" stroke="#a42a3a" stroke-width="1.6" />
<path d="M909.38 461.50 L915.18 461.50 L912.28 471.50 Z" fill="#7e1626" />
<line x1="928.46875" y1="434.5" x2="928.46875" y2="462" stroke="#a42a3a" stroke-width="1.6" />
<path d="M925.57 461.50 L931.37 461.50 L928.47 471.50 Z" fill="#7e1626" />
<line x1="944.653125" y1="434.5" x2="944.653125" y2="462" stroke="#a42a3a" stroke-width="1.6" />
<path d="M941.75 461.50 L947.55 461.50 L944.65 471.50 Z" fill="#7e1626" />
<line x1="960.8374999999999" y1="434.5" x2="960.8374999999999" y2="462" stroke="#a42a3a" stroke-width="1.6" />
<path d="M957.94 461.50 L963.74 461.50 L960.84 471.50 Z" fill="#7e1626" />
<line x1="977.0218749999999" y1="434.5" x2="977.0218749999999" y2="462" stroke="#a42a3a" stroke-width="1.6" />
<path d="M974.12 461.50 L979.92 461.50 L977.02 471.50 Z" fill="#7e1626" />
<line x1="993.20625" y1="434.5" x2="993.20625" y2="462" stroke="#a42a3a" stroke-width="1.6" />
<path d="M990.31 461.50 L996.11 461.50 L993.21 471.50 Z" fill="#7e1626" />
<line x1="1009.390625" y1="434.5" x2="1009.390625" y2="462" stroke="#a42a3a" stroke-width="1.6" />
<path d="M1006.49 461.50 L1012.29 461.50 L1009.39 471.50 Z" fill="#7e1626" />
<line x1="1025.575" y1="434.5" x2="1025.575" y2="462" stroke="#a42a3a" stroke-width="1.6" />
<path d="M1022.68 461.50 L1028.48 461.50 L1025.58 471.50 Z" fill="#7e1626" />
<line x1="1041.7593749999999" y1="434.5" x2="1041.7593749999999" y2="462" stroke="#a42a3a" stroke-width="1.6" />
<path d="M1038.86 461.50 L1044.66 461.50 L1041.76 471.50 Z" fill="#7e1626" />
<line x1="1057.94375" y1="434.5" x2="1057.94375" y2="462" stroke="#a42a3a" stroke-width="1.6" />
<path d="M1055.04 461.50 L1060.84 461.50 L1057.94 471.50 Z" fill="#7e1626" />
<line x1="1074.128125" y1="434.5" x2="1074.128125" y2="462" stroke="#a42a3a" stroke-width="1.6" />
<path d="M1071.23 461.50 L1077.03 461.50 L1074.13 471.50 Z" fill="#7e1626" />
<line x1="1090.3125" y1="434.5" x2="1090.3125" y2="462" stroke="#a42a3a" stroke-width="1.6" />
<path d="M1087.41 461.50 L1093.21 461.50 L1090.31 471.50 Z" fill="#7e1626" />
<line x1="1106.496875" y1="434.5" x2="1106.496875" y2="462" stroke="#a42a3a" stroke-width="1.6" />
<path d="M1103.60 461.50 L1109.40 461.50 L1106.50 471.50 Z" fill="#7e1626" />
<line x1="1122.6812499999999" y1="434.5" x2="1122.6812499999999" y2="462" stroke="#a42a3a" stroke-width="1.6" />
<path d="M1119.78 461.50 L1125.58 461.50 L1122.68 471.50 Z" fill="#7e1626" />
<line x1="1138.865625" y1="434.5" x2="1138.865625" y2="462" stroke="#a42a3a" stroke-width="1.6" />
<path d="M1135.97 461.50 L1141.77 461.50 L1138.87 471.50 Z" fill="#7e1626" />
<line x1="1155.05" y1="434.5" x2="1155.05" y2="462" stroke="#a42a3a" stroke-width="1.6" />
<path d="M1152.15 461.50 L1157.95 461.50 L1155.05 471.50 Z" fill="#7e1626" />
<line x1="1171.234375" y1="434.5" x2="1171.234375" y2="462" stroke="#a42a3a" stroke-width="1.6" />
<path d="M1168.33 461.50 L1174.13 461.50 L1171.23 471.50 Z" fill="#7e1626" />
<line x1="1187.41875" y1="434.5" x2="1187.41875" y2="462" stroke="#a42a3a" stroke-width="1.6" />
<path d="M1184.52 461.50 L1190.32 461.50 L1187.42 471.50 Z" fill="#7e1626" />
<line x1="1203.6031249999999" y1="434.5" x2="1203.6031249999999" y2="462" stroke="#a42a3a" stroke-width="1.6" />
<path d="M1200.70 461.50 L1206.50 461.50 L1203.60 471.50 Z" fill="#7e1626" />
<line x1="1219.7875" y1="434.5" x2="1219.7875" y2="462" stroke="#a42a3a" stroke-width="1.6" />
<path d="M1216.89 461.50 L1222.69 461.50 L1219.79 471.50 Z" fill="#7e1626" />
<line x1="1235.971875" y1="434.5" x2="1235.971875" y2="462" stroke="#a42a3a" stroke-width="1.6" />
<path d="M1233.07 461.50 L1238.87 461.50 L1235.97 471.50 Z" fill="#7e1626" />
<line x1="1252.15625" y1="434.5" x2="1252.15625" y2="462" stroke="#a42a3a" stroke-width="1.6" />
<path d="M1249.26 461.50 L1255.06 461.50 L1252.16 471.50 Z" fill="#7e1626" />
<line x1="1268.340625" y1="434.5" x2="1268.340625" y2="462" stroke="#a42a3a" stroke-width="1.6" />
<path d="M1265.44 461.50 L1271.24 461.50 L1268.34 471.50 Z" fill="#7e1626" />
<line x1="1284.5249999999999" y1="434.5" x2="1284.5249999999999" y2="462" stroke="#a42a3a" stroke-width="1.6" />
<path d="M1281.62 461.50 L1287.42 461.50 L1284.52 471.50 Z" fill="#7e1626" />
<line x1="1300.709375" y1="434.5" x2="1300.709375" y2="462" stroke="#a42a3a" stroke-width="1.6" />
<path d="M1297.81 461.50 L1303.61 461.50 L1300.71 471.50 Z" fill="#7e1626" />
<line x1="1316.89375" y1="434.5" x2="1316.89375" y2="462" stroke="#a42a3a" stroke-width="1.6" />
<path d="M1313.99 461.50 L1319.79 461.50 L1316.89 471.50 Z" fill="#7e1626" />
<line x1="1333.078125" y1="434.5" x2="1333.078125" y2="462" stroke="#a42a3a" stroke-width="1.6" />
<path d="M1330.18 461.50 L1335.98 461.50 L1333.08 471.50 Z" fill="#7e1626" />
<line x1="1349.2625" y1="434.5" x2="1349.2625" y2="462" stroke="#a42a3a" stroke-width="1.6" />
<path d="M1346.36 461.50 L1352.16 461.50 L1349.26 471.50 Z" fill="#7e1626" />
<line x1="1365.4468749999999" y1="434.5" x2="1365.4468749999999" y2="462" stroke="#a42a3a" stroke-width="1.6" />
<path d="M1362.55 461.50 L1368.35 461.50 L1365.45 471.50 Z" fill="#7e1626" />
<line x1="1381.63125" y1="434.5" x2="1381.63125" y2="462" stroke="#a42a3a" stroke-width="1.6" />
<path d="M1378.73 461.50 L1384.53 461.50 L1381.63 471.50 Z" fill="#7e1626" />
<line x1="1397.815625" y1="434.5" x2="1397.815625" y2="462" stroke="#a42a3a" stroke-width="1.6" />
<path d="M1394.92 461.50 L1400.72 461.50 L1397.82 471.50 Z" fill="#7e1626" />
<line x1="1414.0" y1="434.5" x2="1414.0" y2="462" stroke="#a42a3a" stroke-width="1.6" />
<path d="M1411.10 461.50 L1416.90 461.50 L1414.00 471.50 Z" fill="#7e1626" />
<rect x="880.5" y="446.2" width="30" height="13.3" fill="#ffffff" stroke="#b4b4b4" stroke-width="1" />
<text x="895.5" y="456.7" font-size="9.5" fill="#3a3a3a" text-anchor="middle" textLength="22" lengthAdjust="spacingAndGlyphs" >12,99</text>
<rect x="378.2" y="475.5" width="1035.8" height="35" fill="#e2f3f3" stroke="#4a9c9c" stroke-width="1.2" />
<line x1="378.2" y1="510.5" x2="1414.0" y2="510.5" stroke="#3a8080" stroke-width="1.2" />
<line x1="378.2" y1="476" x2="378.2" y2="500" stroke="#359c9c" stroke-width="1.5" />
<path d="M375.30 500.00 L381.10 500.00 L378.20 509.50 Z" fill="#1e7e7e" />
<line x1="394.384375" y1="476" x2="394.384375" y2="500" stroke="#359c9c" stroke-width="1.5" />
<path d="M391.48 500.00 L397.28 500.00 L394.38 509.50 Z" fill="#1e7e7e" />
<line x1="410.56874999999997" y1="476" x2="410.56874999999997" y2="500" stroke="#359c9c" stroke-width="1.5" />
<path d="M407.67 500.00 L413.47 500.00 L410.57 509.50 Z" fill="#1e7e7e" />
<line x1="426.75312499999995" y1="476" x2="426.75312499999995" y2="500" stroke="#359c9c" stroke-width="1.5" />
<path d="M423.85 500.00 L429.65 500.00 L426.75 509.50 Z" fill="#1e7e7e" />
<line x1="442.9375" y1="476" x2="442.9375" y2="500" stroke="#359c9c" stroke-width="1.5" />
<path d="M440.04 500.00 L445.84 500.00 L442.94 509.50 Z" fill="#1e7e7e" />
<line x1="459.121875" y1="476" x2="459.121875" y2="500" stroke="#359c9c" stroke-width="1.5" />
<path d="M456.22 500.00 L462.02 500.00 L459.12 509.50 Z" fill="#1e7e7e" />
<line x1="475.30625" y1="476" x2="475.30625" y2="500" stroke="#359c9c" stroke-width="1.5" />
<path d="M472.41 500.00 L478.21 500.00 L475.31 509.50 Z" fill="#1e7e7e" />
<line x1="491.49062499999997" y1="476" x2="491.49062499999997" y2="500" stroke="#359c9c" stroke-width="1.5" />
<path d="M488.59 500.00 L494.39 500.00 L491.49 509.50 Z" fill="#1e7e7e" />
<line x1="507.67499999999995" y1="476" x2="507.67499999999995" y2="500" stroke="#359c9c" stroke-width="1.5" />
<path d="M504.77 500.00 L510.57 500.00 L507.67 509.50 Z" fill="#1e7e7e" />
<line x1="523.859375" y1="476" x2="523.859375" y2="500" stroke="#359c9c" stroke-width="1.5" />
<path d="M520.96 500.00 L526.76 500.00 L523.86 509.50 Z" fill="#1e7e7e" />
<line x1="540.04375" y1="476" x2="540.04375" y2="500" stroke="#359c9c" stroke-width="1.5" />
<path d="M537.14 500.00 L542.94 500.00 L540.04 509.50 Z" fill="#1e7e7e" />
<line x1="556.228125" y1="476" x2="556.228125" y2="500" stroke="#359c9c" stroke-width="1.5" />
<path d="M553.33 500.00 L559.13 500.00 L556.23 509.50 Z" fill="#1e7e7e" />
<line x1="572.4124999999999" y1="476" x2="572.4124999999999" y2="500" stroke="#359c9c" stroke-width="1.5" />
<path d="M569.51 500.00 L575.31 500.00 L572.41 509.50 Z" fill="#1e7e7e" />
<line x1="588.596875" y1="476" x2="588.596875" y2="500" stroke="#359c9c" stroke-width="1.5" />
<path d="M585.70 500.00 L591.50 500.00 L588.60 509.50 Z" fill="#1e7e7e" />
<line x1="604.78125" y1="476" x2="604.78125" y2="500" stroke="#359c9c" stroke-width="1.5" />
<path d="M601.88 500.00 L607.68 500.00 L604.78 509.50 Z" fill="#1e7e7e" />
<line x1="620.965625" y1="476" x2="620.965625" y2="500" stroke="#359c9c" stroke-width="1.5" />
<path d="M618.07 500.00 L623.87 500.00 L620.97 509.50 Z" fill="#1e7e7e" />
<line x1="637.15" y1="476" x2="637.15" y2="500" stroke="#359c9c" stroke-width="1.5" />
<path d="M634.25 500.00 L640.05 500.00 L637.15 509.50 Z" fill="#1e7e7e" />
<line x1="653.3343749999999" y1="476" x2="653.3343749999999" y2="500" stroke="#359c9c" stroke-width="1.5" />
<path d="M650.43 500.00 L656.23 500.00 L653.33 509.50 Z" fill="#1e7e7e" />
<line x1="669.51875" y1="476" x2="669.51875" y2="500" stroke="#359c9c" stroke-width="1.5" />
<path d="M666.62 500.00 L672.42 500.00 L669.52 509.50 Z" fill="#1e7e7e" />
<line x1="685.703125" y1="476" x2="685.703125" y2="500" stroke="#359c9c" stroke-width="1.5" />
<path d="M682.80 500.00 L688.60 500.00 L685.70 509.50 Z" fill="#1e7e7e" />
<line x1="701.8875" y1="476" x2="701.8875" y2="500" stroke="#359c9c" stroke-width="1.5" />
<path d="M698.99 500.00 L704.79 500.00 L701.89 509.50 Z" fill="#1e7e7e" />
<line x1="718.071875" y1="476" x2="718.071875" y2="500" stroke="#359c9c" stroke-width="1.5" />
<path d="M715.17 500.00 L720.97 500.00 L718.07 509.50 Z" fill="#1e7e7e" />
<line x1="734.2562499999999" y1="476" x2="734.2562499999999" y2="500" stroke="#359c9c" stroke-width="1.5" />
<path d="M731.36 500.00 L737.16 500.00 L734.26 509.50 Z" fill="#1e7e7e" />
<line x1="750.440625" y1="476" x2="750.440625" y2="500" stroke="#359c9c" stroke-width="1.5" />
<path d="M747.54 500.00 L753.34 500.00 L750.44 509.50 Z" fill="#1e7e7e" />
<line x1="766.625" y1="476" x2="766.625" y2="500" stroke="#359c9c" stroke-width="1.5" />
<path d="M763.73 500.00 L769.52 500.00 L766.62 509.50 Z" fill="#1e7e7e" />
<line x1="782.809375" y1="476" x2="782.809375" y2="500" stroke="#359c9c" stroke-width="1.5" />
<path d="M779.91 500.00 L785.71 500.00 L782.81 509.50 Z" fill="#1e7e7e" />
<line x1="798.99375" y1="476" x2="798.99375" y2="500" stroke="#359c9c" stroke-width="1.5" />
<path d="M796.09 500.00 L801.89 500.00 L798.99 509.50 Z" fill="#1e7e7e" />
<line x1="815.1781249999999" y1="476" x2="815.1781249999999" y2="500" stroke="#359c9c" stroke-width="1.5" />
<path d="M812.28 500.00 L818.08 500.00 L815.18 509.50 Z" fill="#1e7e7e" />
<line x1="831.3625" y1="476" x2="831.3625" y2="500" stroke="#359c9c" stroke-width="1.5" />
<path d="M828.46 500.00 L834.26 500.00 L831.36 509.50 Z" fill="#1e7e7e" />
<line x1="847.546875" y1="476" x2="847.546875" y2="500" stroke="#359c9c" stroke-width="1.5" />
<path d="M844.65 500.00 L850.45 500.00 L847.55 509.50 Z" fill="#1e7e7e" />
<line x1="863.73125" y1="476" x2="863.73125" y2="500" stroke="#359c9c" stroke-width="1.5" />
<path d="M860.83 500.00 L866.63 500.00 L863.73 509.50 Z" fill="#1e7e7e" />
<line x1="879.915625" y1="476" x2="879.915625" y2="500" stroke="#359c9c" stroke-width="1.5" />
<path d="M877.02 500.00 L882.82 500.00 L879.92 509.50 Z" fill="#1e7e7e" />
<line x1="896.0999999999999" y1="476" x2="896.0999999999999" y2="500" stroke="#359c9c" stroke-width="1.5" />
<path d="M893.20 500.00 L899.00 500.00 L896.10 509.50 Z" fill="#1e7e7e" />
<line x1="912.284375" y1="476" x2="912.284375" y2="500" stroke="#359c9c" stroke-width="1.5" />
<path d="M909.38 500.00 L915.18 500.00 L912.28 509.50 Z" fill="#1e7e7e" />
<line x1="928.46875" y1="476" x2="928.46875" y2="500" stroke="#359c9c" stroke-width="1.5" />
<path d="M925.57 500.00 L931.37 500.00 L928.47 509.50 Z" fill="#1e7e7e" />
<line x1="944.653125" y1="476" x2="944.653125" y2="500" stroke="#359c9c" stroke-width="1.5" />
<path d="M941.75 500.00 L947.55 500.00 L944.65 509.50 Z" fill="#1e7e7e" />
<line x1="960.8374999999999" y1="476" x2="960.8374999999999" y2="500" stroke="#359c9c" stroke-width="1.5" />
<path d="M957.94 500.00 L963.74 500.00 L960.84 509.50 Z" fill="#1e7e7e" />
<line x1="977.0218749999999" y1="476" x2="977.0218749999999" y2="500" stroke="#359c9c" stroke-width="1.5" />
<path d="M974.12 500.00 L979.92 500.00 L977.02 509.50 Z" fill="#1e7e7e" />
<line x1="993.20625" y1="476" x2="993.20625" y2="500" stroke="#359c9c" stroke-width="1.5" />
<path d="M990.31 500.00 L996.11 500.00 L993.21 509.50 Z" fill="#1e7e7e" />
<line x1="1009.390625" y1="476" x2="1009.390625" y2="500" stroke="#359c9c" stroke-width="1.5" />
<path d="M1006.49 500.00 L1012.29 500.00 L1009.39 509.50 Z" fill="#1e7e7e" />
<line x1="1025.575" y1="476" x2="1025.575" y2="500" stroke="#359c9c" stroke-width="1.5" />
<path d="M1022.68 500.00 L1028.48 500.00 L1025.58 509.50 Z" fill="#1e7e7e" />
<line x1="1041.7593749999999" y1="476" x2="1041.7593749999999" y2="500" stroke="#359c9c" stroke-width="1.5" />
<path d="M1038.86 500.00 L1044.66 500.00 L1041.76 509.50 Z" fill="#1e7e7e" />
<line x1="1057.94375" y1="476" x2="1057.94375" y2="500" stroke="#359c9c" stroke-width="1.5" />
<path d="M1055.04 500.00 L1060.84 500.00 L1057.94 509.50 Z" fill="#1e7e7e" />
<line x1="1074.128125" y1="476" x2="1074.128125" y2="500" stroke="#359c9c" stroke-width="1.5" />
<path d="M1071.23 500.00 L1077.03 500.00 L1074.13 509.50 Z" fill="#1e7e7e" />
<line x1="1090.3125" y1="476" x2="1090.3125" y2="500" stroke="#359c9c" stroke-width="1.5" />
<path d="M1087.41 500.00 L1093.21 500.00 L1090.31 509.50 Z" fill="#1e7e7e" />
<line x1="1106.496875" y1="476" x2="1106.496875" y2="500" stroke="#359c9c" stroke-width="1.5" />
<path d="M1103.60 500.00 L1109.40 500.00 L1106.50 509.50 Z" fill="#1e7e7e" />
<line x1="1122.6812499999999" y1="476" x2="1122.6812499999999" y2="500" stroke="#359c9c" stroke-width="1.5" />
<path d="M1119.78 500.00 L1125.58 500.00 L1122.68 509.50 Z" fill="#1e7e7e" />
<line x1="1138.865625" y1="476" x2="1138.865625" y2="500" stroke="#359c9c" stroke-width="1.5" />
<path d="M1135.97 500.00 L1141.77 500.00 L1138.87 509.50 Z" fill="#1e7e7e" />
<line x1="1155.05" y1="476" x2="1155.05" y2="500" stroke="#359c9c" stroke-width="1.5" />
<path d="M1152.15 500.00 L1157.95 500.00 L1155.05 509.50 Z" fill="#1e7e7e" />
<line x1="1171.234375" y1="476" x2="1171.234375" y2="500" stroke="#359c9c" stroke-width="1.5" />
<path d="M1168.33 500.00 L1174.13 500.00 L1171.23 509.50 Z" fill="#1e7e7e" />
<line x1="1187.41875" y1="476" x2="1187.41875" y2="500" stroke="#359c9c" stroke-width="1.5" />
<path d="M1184.52 500.00 L1190.32 500.00 L1187.42 509.50 Z" fill="#1e7e7e" />
<line x1="1203.6031249999999" y1="476" x2="1203.6031249999999" y2="500" stroke="#359c9c" stroke-width="1.5" />
<path d="M1200.70 500.00 L1206.50 500.00 L1203.60 509.50 Z" fill="#1e7e7e" />
<line x1="1219.7875" y1="476" x2="1219.7875" y2="500" stroke="#359c9c" stroke-width="1.5" />
<path d="M1216.89 500.00 L1222.69 500.00 L1219.79 509.50 Z" fill="#1e7e7e" />
<line x1="1235.971875" y1="476" x2="1235.971875" y2="500" stroke="#359c9c" stroke-width="1.5" />
<path d="M1233.07 500.00 L1238.87 500.00 L1235.97 509.50 Z" fill="#1e7e7e" />
<line x1="1252.15625" y1="476" x2="1252.15625" y2="500" stroke="#359c9c" stroke-width="1.5" />
<path d="M1249.26 500.00 L1255.06 500.00 L1252.16 509.50 Z" fill="#1e7e7e" />
<line x1="1268.340625" y1="476" x2="1268.340625" y2="500" stroke="#359c9c" stroke-width="1.5" />
<path d="M1265.44 500.00 L1271.24 500.00 L1268.34 509.50 Z" fill="#1e7e7e" />
<line x1="1284.5249999999999" y1="476" x2="1284.5249999999999" y2="500" stroke="#359c9c" stroke-width="1.5" />
<path d="M1281.62 500.00 L1287.42 500.00 L1284.52 509.50 Z" fill="#1e7e7e" />
<line x1="1300.709375" y1="476" x2="1300.709375" y2="500" stroke="#359c9c" stroke-width="1.5" />
<path d="M1297.81 500.00 L1303.61 500.00 L1300.71 509.50 Z" fill="#1e7e7e" />
<line x1="1316.89375" y1="476" x2="1316.89375" y2="500" stroke="#359c9c" stroke-width="1.5" />
<path d="M1313.99 500.00 L1319.79 500.00 L1316.89 509.50 Z" fill="#1e7e7e" />
<line x1="1333.078125" y1="476" x2="1333.078125" y2="500" stroke="#359c9c" stroke-width="1.5" />
<path d="M1330.18 500.00 L1335.98 500.00 L1333.08 509.50 Z" fill="#1e7e7e" />
<line x1="1349.2625" y1="476" x2="1349.2625" y2="500" stroke="#359c9c" stroke-width="1.5" />
<path d="M1346.36 500.00 L1352.16 500.00 L1349.26 509.50 Z" fill="#1e7e7e" />
<line x1="1365.4468749999999" y1="476" x2="1365.4468749999999" y2="500" stroke="#359c9c" stroke-width="1.5" />
<path d="M1362.55 500.00 L1368.35 500.00 L1365.45 509.50 Z" fill="#1e7e7e" />
<line x1="1381.63125" y1="476" x2="1381.63125" y2="500" stroke="#359c9c" stroke-width="1.5" />
<path d="M1378.73 500.00 L1384.53 500.00 L1381.63 509.50 Z" fill="#1e7e7e" />
<line x1="1397.815625" y1="476" x2="1397.815625" y2="500" stroke="#359c9c" stroke-width="1.5" />
<path d="M1394.92 500.00 L1400.72 500.00 L1397.82 509.50 Z" fill="#1e7e7e" />
<line x1="1414.0" y1="476" x2="1414.0" y2="500" stroke="#359c9c" stroke-width="1.5" />
<path d="M1411.10 500.00 L1416.90 500.00 L1414.00 509.50 Z" fill="#1e7e7e" />
<rect x="880.5" y="485.8" width="30" height="12.8" fill="#ffffff" stroke="#b4b4b4" stroke-width="1" />
<text x="895.5" y="495.8" font-size="9.5" fill="#3a3a3a" text-anchor="middle" textLength="22" lengthAdjust="spacingAndGlyphs" >12,00</text>
<line x1="378.5" y1="416.5" x2="378.5" y2="426" stroke="#8a1a2a" stroke-width="1" />
<path d="M376.90 425.00 L380.10 425.00 L378.50 430.00 Z" fill="#8a1a2a" />
<text x="382" y="426.5" font-size="9.5" fill="#444" text-anchor="start" textLength="12" lengthAdjust="spacingAndGlyphs" >8,0</text>
<line x1="613.8" y1="381.3" x2="613.8" y2="398" stroke="#8a2232" stroke-width="1.2" />
<path d="M611.90 397.00 L615.70 397.00 L613.80 403.50 Z" fill="#6e1a28" />
<text x="617.8" y="390.8" font-size="9.5" fill="#444" text-anchor="start" textLength="17" lengthAdjust="spacingAndGlyphs" >12,0</text>
<line x1="849.0" y1="376.3" x2="849.0" y2="398" stroke="#8a2232" stroke-width="1.2" />
<path d="M847.10 397.00 L850.90 397.00 L849.00 403.50 Z" fill="#6e1a28" />
<text x="853.0" y="385.8" font-size="9.5" fill="#444" text-anchor="start" textLength="17" lengthAdjust="spacingAndGlyphs" >15,0</text>
<line x1="1131.5" y1="366.3" x2="1131.5" y2="398" stroke="#8a2232" stroke-width="1.2" />
<path d="M1129.60 397.00 L1133.40 397.00 L1131.50 403.50 Z" fill="#6e1a28" />
<text x="1135.5" y="375.8" font-size="9.5" fill="#444" text-anchor="start" textLength="17" lengthAdjust="spacingAndGlyphs" >20,0</text>
<path d="M378.3 536.8 L1414 536.8 L1414 553.2 L1084 553.2 L896.3 562.6 L707.5 562.6 L378.3 548.3 Z" fill="#6a85d8" stroke="#14204a" stroke-width="2" />
<path d="M707.5 538 v26 M896.3 538 v26" fill="none" stroke="#14204a" stroke-width="1" stroke-dasharray="5 3"/>
<text x="380" y="546" font-size="9" fill="#182660" text-anchor="start" textLength="33" lengthAdjust="spacingAndGlyphs" >HEA 140</text>
<text x="501" y="546" font-size="9" fill="#182660" text-anchor="start" textLength="33" lengthAdjust="spacingAndGlyphs" >HEA 200</text>
<text x="570" y="547.5" font-size="9" fill="#182660" text-anchor="start" textLength="67" lengthAdjust="spacingAndGlyphs" >Stahlträger S235</text>
<text x="796" y="550.5" font-size="9" fill="#182660" text-anchor="start" textLength="33" lengthAdjust="spacingAndGlyphs" >HEA 300</text>
<text x="1041" y="547.5" font-size="9" fill="#182660" text-anchor="start" textLength="33" lengthAdjust="spacingAndGlyphs" >HEA 200</text>
<circle cx="1084.5" cy="545" r="3.3" fill="none" stroke="#1a2a5a" stroke-width="1"/>
<line x1="1084.5" y1="537" x2="1084.5" y2="542" stroke="#1a2a5a" stroke-width="1" />
<path d="M462.5 519.8 h38 v13 h-3.5 l-3 3 l-3 -3 H462.5 Z" fill="#fbf3a8" stroke="#7a7040" stroke-width="0.9" />
<text x="465.5" y="530.3" font-size="9.5" fill="#222" text-anchor="start" textLength="24" lengthAdjust="spacingAndGlyphs" >Kra li</text>
<path d="M1027 519.8 h39 v13 h-4 l-3 3 l-3 -3 H1027 Z" fill="#fbf3a8" stroke="#7a7040" stroke-width="0.9" />
<text x="1030" y="530.3" font-size="9.5" fill="#222" text-anchor="start" textLength="27" lengthAdjust="spacingAndGlyphs" >Feld 1</text>
<path d="M1369.5 519.8 h38 v13 h-3.5 l-3 3 l-3 -3 H1369.5 Z" fill="#fbf3a8" stroke="#7a7040" stroke-width="0.9" />
<text x="1372.5" y="530.3" font-size="9.5" fill="#222" text-anchor="start" textLength="27" lengthAdjust="spacingAndGlyphs" >Feld 2</text>
<path d="M519.2 555 L511.70000000000005 570 L526.7 570 Z" fill="#ffffff" stroke="#5a9a5a" stroke-width="1.2" />
<line x1="511.20000000000005" y1="570.5" x2="527.2" y2="570.5" stroke="#5a9a5a" stroke-width="1" />
<path d="M514.2 570.5 l-2 3" fill="none" stroke="#5a9a5a" stroke-width="1" />
<path d="M518.2 570.5 l-2 3" fill="none" stroke="#5a9a5a" stroke-width="1" />
<path d="M522.2 570.5 l-2 3" fill="none" stroke="#5a9a5a" stroke-width="1" />
<path d="M526.2 570.5 l-2 3" fill="none" stroke="#5a9a5a" stroke-width="1" />
<path d="M1084.5 555 L1077.0 570 L1092.0 570 Z" fill="#ffffff" stroke="#5a9a5a" stroke-width="1.2" />
<line x1="1076.5" y1="574" x2="1092.5" y2="574" stroke="#7ab07a" stroke-width="1.6" />
<path d="M1413.5 555 L1406.0 570 L1421.0 570 Z" fill="#ffffff" stroke="#5a9a5a" stroke-width="1.2" />
<line x1="1405.5" y1="574" x2="1421.5" y2="574" stroke="#7ab07a" stroke-width="1.6" />
<circle cx="359" cy="565" r="4.1" fill="#565666"/>
<rect x="354.4" y="564.1" width="9.2" height="1.8" fill="#ffffff" />
<text x="360.8" y="571.6" font-size="7" fill="#222" text-anchor="start" font-weight="bold" >K</text>
<circle cx="1432.7" cy="548.4" r="4.1" fill="#565666"/>
<path d="M1432.7 543.9 L1433.7 547.4 L1437.2 548.4 L1433.7 549.4 L1432.7 552.9 L1431.7 549.4 L1428.2 548.4 L1431.7 547.4 Z" fill="#ffffff" />
<text x="1434.5" y="555.0" font-size="7" fill="#222" text-anchor="start" font-weight="bold" >F</text>
<circle cx="1448.7" cy="548.4" r="4.1" fill="#565666"/>
<rect x="1444.1000000000001" y="547.5" width="9.2" height="1.8" fill="#ffffff" />
<text x="1450.5" y="555.0" font-size="7" fill="#222" text-anchor="start" font-weight="bold" >F</text>
<circle cx="1432.7" cy="564.4" r="4.1" fill="#565666"/>
<path d="M1432.7 559.9 L1433.7 563.4 L1437.2 564.4 L1433.7 565.4 L1432.7 568.9 L1431.7 565.4 L1428.2 564.4 L1431.7 563.4 Z" fill="#ffffff" />
<text x="1434.5" y="571.0" font-size="7" fill="#222" text-anchor="start" font-weight="bold" >K</text>
<line x1="378" y1="639.5" x2="1414" y2="639.5" stroke="#868a96" stroke-width="1" />
<line x1="378" y1="658.5" x2="1414" y2="658.5" stroke="#868a96" stroke-width="1" />
<line x1="378.5" y1="620" x2="378.5" y2="642" stroke="#868a96" stroke-width="1" />
<path d="M377.0 638 l1.5 3 l1.5 -3" fill="none" stroke="#868a96" stroke-width="0.8" />
<line x1="519.5" y1="620" x2="519.5" y2="642" stroke="#868a96" stroke-width="1" />
<path d="M518.0 638 l1.5 3 l1.5 -3" fill="none" stroke="#868a96" stroke-width="0.8" />
<line x1="1084.5" y1="620" x2="1084.5" y2="642" stroke="#868a96" stroke-width="1" />
<path d="M1083.0 638 l1.5 3 l1.5 -3" fill="none" stroke="#868a96" stroke-width="0.8" />
<line x1="1413.5" y1="620" x2="1413.5" y2="642" stroke="#868a96" stroke-width="1" />
<path d="M1412.0 638 l1.5 3 l1.5 -3" fill="none" stroke="#868a96" stroke-width="0.8" />
<line x1="378.5" y1="641" x2="378.5" y2="661" stroke="#868a96" stroke-width="1" />
<line x1="1413.5" y1="641" x2="1413.5" y2="661" stroke="#868a96" stroke-width="1" />
<path d="M377 657 l1.5 3 l1.5 -3 M1412 657 l1.5 3 l1.5 -3" fill="none" stroke="#868a96" stroke-width="0.8" />
<text x="448.5" y="638" font-size="9" fill="#444" text-anchor="middle" textLength="17" lengthAdjust="spacingAndGlyphs" >1,50</text>
<text x="801.5" y="638" font-size="9" fill="#444" text-anchor="middle" textLength="17" lengthAdjust="spacingAndGlyphs" >6,00</text>
<text x="1248.5" y="638" font-size="9" fill="#444" text-anchor="middle" textLength="17" lengthAdjust="spacingAndGlyphs" >3,50</text>
<text x="896" y="657" font-size="9" fill="#aaaaaa" text-anchor="middle" textLength="22" lengthAdjust="spacingAndGlyphs" >11,00</text>
<line x1="341" y1="755" x2="376" y2="755" stroke="#1a1aa0" stroke-width="1.6" />
<path d="M374 750.5 L390.5 755 L374 759.5 Z" fill="#1010c8" />
<line x1="341" y1="755" x2="341" y2="790" stroke="#1a1aa0" stroke-width="1.6" />
<path d="M336.5 788.5 L341 805 L345.5 788.5 Z" fill="#1010c8" />
<circle cx="341" cy="755" r="2.6" fill="#e01818"/>
<text x="394.5" y="760" font-size="10" fill="#333" text-anchor="start" textLength="9" lengthAdjust="spacingAndGlyphs" >X</text>
<text x="337" y="817" font-size="10" fill="#333" text-anchor="start" textLength="8.5" lengthAdjust="spacingAndGlyphs" >Z</text>
<text x="1349" y="792.5" font-size="10" fill="#9a9a9a" text-anchor="start" textLength="50" lengthAdjust="spacingAndGlyphs" >Auslastung</text>
<text x="1349" y="806" font-size="10" fill="#333" text-anchor="start" textLength="73" lengthAdjust="spacingAndGlyphs" >Querschnitt (pl.)</text>
<text x="1349" y="820" font-size="10" fill="#333" text-anchor="start" textLength="101" lengthAdjust="spacingAndGlyphs" >Gebrauchstauglichkeit</text>
<rect x="1453" y="797.5" width="54" height="9" fill="#efefef" stroke="#d8d8d8" stroke-width="0.8" />
<rect x="1453.5" y="798.0" width="41.44" height="8" fill="#aae46c" />
<text x="1512" y="806.0" font-size="10" fill="#333" text-anchor="start" textLength="19" lengthAdjust="spacingAndGlyphs" >74%</text>
<rect x="1453" y="811" width="54" height="9" fill="#efefef" stroke="#d8d8d8" stroke-width="0.8" />
<rect x="1453.5" y="811.5" width="39.199999999999996" height="8" fill="#aae46c" />
<text x="1512" y="819.5" font-size="10" fill="#333" text-anchor="start" textLength="19" lengthAdjust="spacingAndGlyphs" >70%</text>
<rect x="273" y="822.5" width="1263" height="3.5" fill="#eef2f8" />
<rect x="273" y="826" width="1263" height="19.5" fill="#bccfe6" />
<rect x="277" y="829" width="100" height="17" fill="#eaf1fa" rx="2"/>
<rect x="281" y="832" width="11" height="10" fill="#dde6f2" stroke="#8aa2c4" stroke-width="0.8" />
<line x1="284.7" y1="832" x2="284.7" y2="842" stroke="#a8bad6" stroke-width="0.7" />
<line x1="288.4" y1="832" x2="288.4" y2="842" stroke="#a8bad6" stroke-width="0.7" />
<line x1="281" y1="835" x2="292" y2="835" stroke="#8aa2c4" stroke-width="0.8" />
<text x="300" y="840" font-size="9.5" fill="#222" text-anchor="start" textLength="70" lengthAdjust="spacingAndGlyphs" >Felder/Abschnitte</text>
<rect x="387" y="832" width="11" height="10" fill="#dde6f2" stroke="#8aa2c4" stroke-width="0.8" />
<line x1="390.7" y1="832" x2="390.7" y2="842" stroke="#a8bad6" stroke-width="0.7" />
<line x1="394.4" y1="832" x2="394.4" y2="842" stroke="#a8bad6" stroke-width="0.7" />
<line x1="387" y1="835" x2="398" y2="835" stroke="#8aa2c4" stroke-width="0.8" />
<text x="405" y="840" font-size="9.5" fill="#222" text-anchor="start" textLength="33" lengthAdjust="spacingAndGlyphs" >Auflager</text>
<rect x="456" y="832" width="11" height="10" fill="#dde6f2" stroke="#8aa2c4" stroke-width="0.8" />
<line x1="459.7" y1="832" x2="459.7" y2="842" stroke="#a8bad6" stroke-width="0.7" />
<line x1="463.4" y1="832" x2="463.4" y2="842" stroke="#a8bad6" stroke-width="0.7" />
<line x1="456" y1="835" x2="467" y2="835" stroke="#8aa2c4" stroke-width="0.8" />
<text x="474" y="840" font-size="9.5" fill="#222" text-anchor="start" textLength="34" lengthAdjust="spacingAndGlyphs" >Gelenke</text>
<rect x="525" y="832" width="11" height="10" fill="#dde6f2" stroke="#8aa2c4" stroke-width="0.8" />
<line x1="528.7" y1="832" x2="528.7" y2="842" stroke="#a8bad6" stroke-width="0.7" />
<line x1="532.4" y1="832" x2="532.4" y2="842" stroke="#a8bad6" stroke-width="0.7" />
<line x1="525" y1="835" x2="536" y2="835" stroke="#8aa2c4" stroke-width="0.8" />
<text x="543" y="840" font-size="9.5" fill="#222" text-anchor="start" textLength="52" lengthAdjust="spacingAndGlyphs" >Querschnitte</text>
<rect x="611" y="832" width="11" height="10" fill="#dde6f2" stroke="#8aa2c4" stroke-width="0.8" />
<line x1="614.7" y1="832" x2="614.7" y2="842" stroke="#a8bad6" stroke-width="0.7" />
<line x1="618.4" y1="832" x2="618.4" y2="842" stroke="#a8bad6" stroke-width="0.7" />
<line x1="611" y1="835" x2="622" y2="835" stroke="#8aa2c4" stroke-width="0.8" />
<text x="629" y="840" font-size="9.5" fill="#222" text-anchor="start" textLength="33" lengthAdjust="spacingAndGlyphs" >Schnitte</text>
<rect x="680" y="832" width="11" height="10" fill="#dde6f2" stroke="#8aa2c4" stroke-width="0.8" />
<line x1="683.7" y1="832" x2="683.7" y2="842" stroke="#a8bad6" stroke-width="0.7" />
<line x1="687.4" y1="832" x2="687.4" y2="842" stroke="#a8bad6" stroke-width="0.7" />
<line x1="680" y1="835" x2="691" y2="835" stroke="#8aa2c4" stroke-width="0.8" />
<text x="697" y="840" font-size="9.5" fill="#222" text-anchor="start" textLength="27" lengthAdjust="spacingAndGlyphs" >Lasten</text>
<path d="M1525.5 832.5 l6 6 M1531.5 832.5 l-6 6" fill="none" stroke="#111" stroke-width="1.5" />
<rect x="0" y="845.5" width="1536" height="16.5" fill="#f0efee" />
<rect x="0" y="845" width="272" height="1" fill="#d8d8d8" />
<rect x="0" y="862" width="1536" height="2" fill="#2a2a2a" />
</svg>
</body></html>
